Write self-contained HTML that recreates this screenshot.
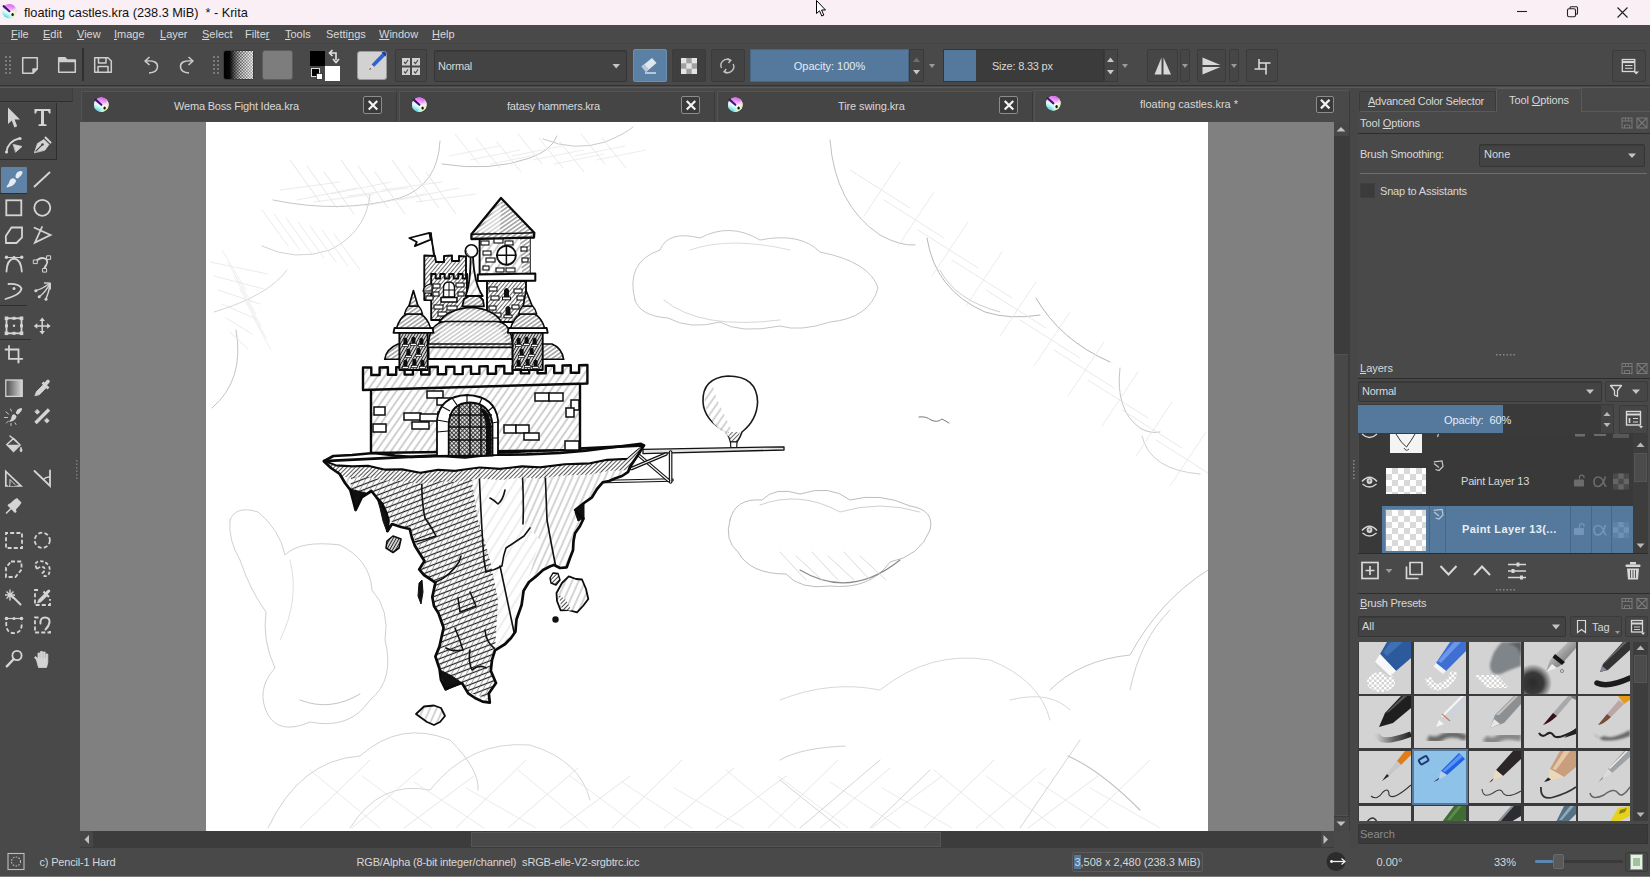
<!DOCTYPE html>
<html>
<head>
<meta charset="utf-8">
<title>Krita</title>
<style>
*{box-sizing:border-box;margin:0;padding:0}
html,body{width:1650px;height:877px;overflow:hidden;background:#494949;font-family:"Liberation Sans",sans-serif;font-size:11px;color:#d6d6d6}
.abs{position:absolute}
#title{left:0;top:0;width:1650px;height:25px;background:#f9eff5;color:#111;font-size:12.75px}
#title .t{left:24px;top:5px;white-space:pre;letter-spacing:-0.02px}
#menu{left:0;top:25px;width:1650px;height:19px;background:#494949}
#menu span{position:absolute;top:3px;font-size:11px;color:#d8d8d8}
#toolbar{left:0;top:44px;width:1650px;height:44px;background:#494949}
#tabs{left:80px;top:88px;width:1270px;height:34px;background:#494949}
.tab{position:absolute;top:2px;height:32px;border-right:1px solid #3a3a3a;border-left:1px solid #525252}
.tab .lbl{position:absolute;top:9px;font-size:11px;color:#d8d8d8;white-space:nowrap}
.tabx{position:absolute;top:8px;width:18px;height:18px;border:1px solid #9a9a9a;border-radius:2px;background:#3a3a3a}
#toolbox{left:0;top:88px;width:80px;height:760px;background:#494949}
#canvasarea{left:80px;top:122px;width:1254px;height:709px;background:#808080;overflow:hidden}
#paper{left:126px;top:0px;width:1002px;height:709px;background:#fff}
#vscroll{left:1334px;top:122px;width:16px;height:709px;background:#3c3c3c}
#hscroll{left:80px;top:831px;width:1254px;height:17px;background:#3c3c3c}
#status{left:0;top:848px;width:1650px;height:29px;background:#494949}
#dock{left:1350px;top:88px;width:300px;height:760px;background:#494949}

.btn{position:absolute;border:1px solid #3b3b3b;border-radius:2px;background:#464646}
.txt{position:absolute;white-space:pre;color:#d8d8d8;font-size:11px;line-height:13px}
.combo{position:absolute;background:#434343;border:1px solid #353535;border-radius:2px;box-shadow:inset 0 1px 0 #3a3a3a}
#ovl{position:absolute;left:0;top:0;width:1650px;height:877px;pointer-events:none}

.dk{position:absolute}
.hdr{position:absolute;left:1358px;width:292px;height:1px;background:#2c2c2c}
.cell{position:absolute;width:52px;height:52px;background:#d3d3d3;overflow:hidden}
.lt{position:absolute;white-space:pre;font-size:11px;line-height:13px;color:#d8d8d8}
</style>
</head>
<body>
<svg width="0" height="0" style="position:absolute"><defs>
<pattern id="cd" width="5" height="5" patternUnits="userSpaceOnUse"><rect width="2.5" height="2.5" fill="#fff"/><rect x="2.5" y="2.5" width="2.5" height="2.5" fill="#fff"/></pattern>
<radialGradient id="air"><stop offset="0" stop-color="#2b2b2b"/><stop offset="0.55" stop-color="#3a3a3a"/><stop offset="1" stop-color="#3a3a3a" stop-opacity="0"/></radialGradient>
<linearGradient id="sfade" x1="0" x2="1"><stop offset="0" stop-color="#333" stop-opacity="0.05"/><stop offset="0.5" stop-color="#333" stop-opacity="0.7"/><stop offset="1" stop-color="#222" stop-opacity="1"/></linearGradient>
<linearGradient id="metal" x1="0" y1="0" x2="1" y2="1"><stop offset="0" stop-color="#fafafa"/><stop offset="0.5" stop-color="#9a9a9a"/><stop offset="1" stop-color="#555"/></linearGradient>
<filter id="bl"><feGaussianBlur stdDeviation="1.6"/></filter>
<filter id="bl2"><feGaussianBlur stdDeviation="0.8"/></filter>
</defs></svg>

<!-- TITLE BAR -->
<div id="title" class="abs">
  <div class="abs t">floating castles.kra (238.3 MiB)  * - Krita</div>
</div>
<!-- MENU -->
<div id="menu" class="abs">
  <span style="left:11px"><u>F</u>ile</span><span style="left:43px"><u>E</u>dit</span><span style="left:77px"><u>V</u>iew</span><span style="left:114px"><u>I</u>mage</span><span style="left:160px"><u>L</u>ayer</span><span style="left:202px"><u>S</u>elect</span><span style="left:245px">Filte<u>r</u></span><span style="left:285px"><u>T</u>ools</span><span style="left:326px">Setti<u>n</u>gs</span><span style="left:379px"><u>W</u>indow</span><span style="left:432px"><u>H</u>elp</span>
</div>
<!-- TOOLBAR -->
<div id="toolbar" class="abs">
  <div class="abs" style="left:0;top:-1px;width:1650px;height:1px;background:#444"></div>
  <div class="abs" style="left:0;top:41px;width:1650px;height:1px;background:#333"></div>
  <div class="abs" style="left:0;top:43px;width:1650px;height:1px;background:#5a5a5a"></div>
</div>
<!-- toolbar widgets (page coords) -->
<div class="abs" style="left:82px;top:48px;width:2px;height:33px;background:#2f2f2f"></div>
<div class="abs" style="left:223px;top:50px;width:31px;height:30px;border-radius:3px;border:1px solid #3a3a3a;background:linear-gradient(90deg,#000 0%,#080808 22%,#5a5a5a 55%,#a8a8a8 100%)"></div>
<div class="abs" style="left:262px;top:50px;width:31px;height:30px;border-radius:3px;border:1px solid #5c5c5c;background:#7d7d7d"></div>
<div class="abs" style="left:310px;top:51px;width:15px;height:15px;background:#000"></div>
<div class="abs" style="left:325px;top:66px;width:15px;height:15px;background:#fff"></div>
<div class="abs" style="left:357px;top:51px;width:30px;height:29px;border-radius:3px;background:#d2d2d2;border:1px solid #9a9a9a"></div>
<div class="btn" style="left:395px;top:49px;width:32px;height:33px"></div>
<div class="combo" style="left:434px;top:50px;width:193px;height:32px"></div>
<div class="txt" style="left:438px;top:60px;letter-spacing:-0.25px">Normal</div>
<div class="abs" style="left:633px;top:49px;width:34px;height:33px;border-radius:2px;background:#5b80a6;border:1px solid #6d8fb1"></div>
<div class="btn" style="left:672px;top:49px;width:34px;height:33px;background:#3f3f3f"></div>
<div class="btn" style="left:711px;top:49px;width:34px;height:33px;background:#434343"></div>
<div class="abs" style="left:750px;top:49px;width:159px;height:33px;background:#54799d;border:1px solid #456786"></div>
<div class="txt" style="left:750px;top:60px;width:159px;text-align:center;color:#e4ecf4">Opacity: 100%</div>
<div class="abs" style="left:909px;top:49px;width:15px;height:33px;background:#454545;border:1px solid #3a3a3a"></div>
<div class="abs" style="left:943px;top:49px;width:161px;height:33px;background:#3b3b3b;border:1px solid #353535"></div>
<div class="abs" style="left:944px;top:50px;width:32px;height:31px;background:#54799d"></div>
<div class="txt" style="left:992px;top:60px;letter-spacing:-0.22px">Size: 8.33 px</div>
<div class="abs" style="left:1104px;top:49px;width:14px;height:33px;background:#454545;border:1px solid #3a3a3a"></div>
<div class="btn" style="left:1147px;top:49px;width:31px;height:33px"></div>
<div class="btn" style="left:1180px;top:49px;width:10px;height:33px"></div>
<div class="btn" style="left:1197px;top:49px;width:29px;height:33px"></div>
<div class="btn" style="left:1229px;top:49px;width:10px;height:33px"></div>
<div class="btn" style="left:1246px;top:49px;width:32px;height:33px"></div>
<div class="btn" style="left:1612px;top:50px;width:34px;height:32px"></div>

<!-- TABS -->
<div id="tabs" class="abs"></div>
<div class="abs" style="left:81px;top:91px;width:316px;height:30px;background:#454545;border-left:1px solid #545454;border-right:1px solid #3a3a3a;border-top:1px solid #545454"></div>
<div class="txt" style="left:174px;top:100px;letter-spacing:-0.19px">Wema Boss Fight Idea.kra</div>
<div class="abs" style="left:363px;top:96px;width:19px;height:18px;border:1px solid #8c8c8c;border-radius:2px;background:#3a3a3a"></div>
<div class="abs" style="left:399px;top:91px;width:316px;height:30px;background:#454545;border-left:1px solid #545454;border-right:1px solid #3a3a3a;border-top:1px solid #545454"></div>
<div class="txt" style="left:507px;top:100px;letter-spacing:-0.2px">fatasy hammers.kra</div>
<div class="abs" style="left:681px;top:96px;width:19px;height:18px;border:1px solid #8c8c8c;border-radius:2px;background:#3a3a3a"></div>
<div class="abs" style="left:717px;top:91px;width:316px;height:30px;background:#454545;border-left:1px solid #545454;border-right:1px solid #3a3a3a;border-top:1px solid #545454"></div>
<div class="txt" style="left:838px;top:100px;letter-spacing:-0.1px">Tire swing.kra</div>
<div class="abs" style="left:999px;top:96px;width:19px;height:18px;border:1px solid #8c8c8c;border-radius:2px;background:#3a3a3a"></div>
<div class="abs" style="left:1034px;top:90px;width:316px;height:32px;background:#494949;border-left:1px solid #545454;border-right:1px solid #3a3a3a;border-top:1px solid #545454"></div>
<div class="txt" style="left:1140px;top:98px;letter-spacing:-0.02px">floating castles.kra *</div>
<div class="abs" style="left:1316px;top:95.5px;width:18px;height:17px;border:1px solid #8c8c8c;border-radius:2px;background:#3a3a3a"></div>
<!-- TOOLBOX -->
<div id="toolbox" class="abs">
  <div class="abs" style="left:0;top:0;width:73px;height:14px;background:#454545;border-bottom:1px solid #2f2f2f;border-right:1px solid #3d3d3d"></div>
  <div class="abs" style="left:0;top:15px;width:57px;height:57px;background:#464646;border-right:1px solid #2e2e2e;border-bottom:1px solid #2e2e2e"></div>
  <div class="abs" style="left:1px;top:79px;width:26px;height:26px;background:#5f82a7;border-radius:1px"></div>
  <div class="abs" style="left:0;top:105px;width:27px;height:1px;background:#2e2e2e"></div>
  <div class="abs" style="left:0;top:217px;width:27px;height:1px;background:#2e2e2e"></div>
  <div class="abs" style="left:0;top:251px;width:31px;height:1px;background:#2e2e2e"></div>
</div>
<!-- CANVAS -->
<div id="canvasarea" class="abs">
  <div id="paper" class="abs"></div>
</div>
<!--ART--><svg id="art" viewBox="206 122 1002 709" style="position:absolute;left:206px;top:122px;width:1002px;height:709px">
<defs>
 <pattern id="hW" width="6" height="6" patternUnits="userSpaceOnUse" patternTransform="rotate(-55)"><rect width="6" height="6" fill="#fff"/><path d="M0 3 H6" stroke="#777" stroke-width="0.7"/></pattern>
 <pattern id="hR" width="3.4" height="3.4" patternUnits="userSpaceOnUse" patternTransform="rotate(-35)"><rect width="3.4" height="3.4" fill="#fff"/><path d="M0 1.7 H3.4" stroke="#444" stroke-width="0.8"/></pattern>
 <pattern id="hR2" width="2.6" height="2.6" patternUnits="userSpaceOnUse" patternTransform="rotate(-60)"><rect width="2.6" height="2.6" fill="#eee"/><path d="M0 1.3 H2.6" stroke="#222" stroke-width="1.1"/></pattern>
 <pattern id="hT" width="3" height="3" patternUnits="userSpaceOnUse" patternTransform="rotate(-50)"><rect width="3" height="3" fill="#fff"/><path d="M0 1.5 H3" stroke="#444" stroke-width="0.8"/></pattern>
 <pattern id="hI" width="5" height="5" patternUnits="userSpaceOnUse" patternTransform="rotate(-21)"><rect width="5" height="5" fill="#fff"/><path d="M0 2.5 H5" stroke="#1c1c1c" stroke-width="1.2"/></pattern>
 <pattern id="hI2" width="4.4" height="4.4" patternUnits="userSpaceOnUse" patternTransform="rotate(-62)"><path d="M0 2.2 H4.4" stroke="#555" stroke-width="0.6"/></pattern>
 <pattern id="hI3" width="6" height="6" patternUnits="userSpaceOnUse" patternTransform="rotate(-66)"><rect width="6" height="6" fill="#fff"/><path d="M0 3 H6" stroke="#7a7a7a" stroke-width="0.65"/></pattern>
 <pattern id="hI4" width="8" height="8" patternUnits="userSpaceOnUse" patternTransform="rotate(-58)"><rect width="8" height="8" fill="#fff"/><path d="M0 4 H8" stroke="#c4c4c4" stroke-width="0.6"/></pattern>
 <pattern id="hG" width="3" height="3" patternUnits="userSpaceOnUse" patternTransform="rotate(-45)"><rect width="3" height="3" fill="#fff"/><path d="M0 1.5 H3" stroke="#333" stroke-width="0.9"/></pattern>
 <pattern id="hGate" width="3" height="3" patternUnits="userSpaceOnUse" patternTransform="rotate(45)"><rect width="3" height="3" fill="#ddd"/><path d="M0 1.5 H3 M1.5 0 V3" stroke="#222" stroke-width="0.8"/></pattern>
</defs>

<path d="M440 141 Q438 185 400 198 Q340 214 273 200" fill="none" stroke="#c6c6c6" stroke-width="1" stroke-linecap="round"/>
<path d="M370 195 Q366 232 330 250 Q295 262 262 246" fill="none" stroke="#d2d2d2" stroke-width="1" stroke-linecap="round"/>
<path d="M287 270 Q268 296 214 312" fill="none" stroke="#d6d6d6" stroke-width="1" stroke-linecap="round"/>
<path d="M236 330 Q245 380 212 408" fill="none" stroke="#c4c4c4" stroke-width="1" stroke-linecap="round"/>
<path d="M442 164 Q490 172 530 158 Q552 150 557 136" fill="none" stroke="#c2c2c2" stroke-width="1" stroke-linecap="round"/>
<path d="M543 139 Q575 152 605 142 Q625 134 633 127" fill="none" stroke="#cacaca" stroke-width="1" stroke-linecap="round"/>
<path d="M290 160 L320 202" fill="none" stroke="#e0e0e0" stroke-width="0.8" stroke-linecap="round"/>
<path d="M280 190 L340 182" fill="none" stroke="#e6e6e6" stroke-width="0.8" stroke-linecap="round"/>
<path d="M307 166 L337 208" fill="none" stroke="#e0e0e0" stroke-width="0.8" stroke-linecap="round"/>
<path d="M297 200 L357 188" fill="none" stroke="#e6e6e6" stroke-width="0.8" stroke-linecap="round"/>
<path d="M324 172 L354 214" fill="none" stroke="#e0e0e0" stroke-width="0.8" stroke-linecap="round"/>
<path d="M314 202 L374 194" fill="none" stroke="#e6e6e6" stroke-width="0.8" stroke-linecap="round"/>
<path d="M341 160 L371 202" fill="none" stroke="#e0e0e0" stroke-width="0.8" stroke-linecap="round"/>
<path d="M331 194 L391 182" fill="none" stroke="#e6e6e6" stroke-width="0.8" stroke-linecap="round"/>
<path d="M358 166 L388 208" fill="none" stroke="#e0e0e0" stroke-width="0.8" stroke-linecap="round"/>
<path d="M348 196 L408 188" fill="none" stroke="#e6e6e6" stroke-width="0.8" stroke-linecap="round"/>
<path d="M375 172 L405 214" fill="none" stroke="#e0e0e0" stroke-width="0.8" stroke-linecap="round"/>
<path d="M365 206 L425 194" fill="none" stroke="#e6e6e6" stroke-width="0.8" stroke-linecap="round"/>
<path d="M392 160 L422 202" fill="none" stroke="#e0e0e0" stroke-width="0.8" stroke-linecap="round"/>
<path d="M382 190 L442 182" fill="none" stroke="#e6e6e6" stroke-width="0.8" stroke-linecap="round"/>
<path d="M409 166 L439 208" fill="none" stroke="#e0e0e0" stroke-width="0.8" stroke-linecap="round"/>
<path d="M399 200 L459 188" fill="none" stroke="#e6e6e6" stroke-width="0.8" stroke-linecap="round"/>
<path d="M426 172 L456 214" fill="none" stroke="#e0e0e0" stroke-width="0.8" stroke-linecap="round"/>
<path d="M416 202 L476 194" fill="none" stroke="#e6e6e6" stroke-width="0.8" stroke-linecap="round"/>
<path d="M455 134 L479 164" fill="none" stroke="#e2e2e2" stroke-width="0.8" stroke-linecap="round"/>
<path d="M449 156 L499 146" fill="none" stroke="#e8e8e8" stroke-width="0.8" stroke-linecap="round"/>
<path d="M476 138 L500 168" fill="none" stroke="#e2e2e2" stroke-width="0.8" stroke-linecap="round"/>
<path d="M470 160 L520 150" fill="none" stroke="#e8e8e8" stroke-width="0.8" stroke-linecap="round"/>
<path d="M497 142 L521 172" fill="none" stroke="#e2e2e2" stroke-width="0.8" stroke-linecap="round"/>
<path d="M491 164 L541 154" fill="none" stroke="#e8e8e8" stroke-width="0.8" stroke-linecap="round"/>
<path d="M518 134 L542 164" fill="none" stroke="#e2e2e2" stroke-width="0.8" stroke-linecap="round"/>
<path d="M512 156 L562 146" fill="none" stroke="#e8e8e8" stroke-width="0.8" stroke-linecap="round"/>
<path d="M539 138 L563 168" fill="none" stroke="#e2e2e2" stroke-width="0.8" stroke-linecap="round"/>
<path d="M533 160 L583 150" fill="none" stroke="#e8e8e8" stroke-width="0.8" stroke-linecap="round"/>
<path d="M560 142 L584 172" fill="none" stroke="#e2e2e2" stroke-width="0.8" stroke-linecap="round"/>
<path d="M554 164 L604 154" fill="none" stroke="#e8e8e8" stroke-width="0.8" stroke-linecap="round"/>
<path d="M581 134 L605 164" fill="none" stroke="#e2e2e2" stroke-width="0.8" stroke-linecap="round"/>
<path d="M575 156 L625 146" fill="none" stroke="#e8e8e8" stroke-width="0.8" stroke-linecap="round"/>
<path d="M602 138 L626 168" fill="none" stroke="#e2e2e2" stroke-width="0.8" stroke-linecap="round"/>
<path d="M596 160 L646 150" fill="none" stroke="#e8e8e8" stroke-width="0.8" stroke-linecap="round"/>
<path d="M262 210 L288 246" fill="none" stroke="#e6e6e6" stroke-width="0.8" stroke-linecap="round"/>
<path d="M274 214 L300 250" fill="none" stroke="#e6e6e6" stroke-width="0.8" stroke-linecap="round"/>
<path d="M286 218 L312 254" fill="none" stroke="#e6e6e6" stroke-width="0.8" stroke-linecap="round"/>
<path d="M298 222 L324 258" fill="none" stroke="#e6e6e6" stroke-width="0.8" stroke-linecap="round"/>
<path d="M310 226 L336 262" fill="none" stroke="#e6e6e6" stroke-width="0.8" stroke-linecap="round"/>
<path d="M322 230 L348 266" fill="none" stroke="#e6e6e6" stroke-width="0.8" stroke-linecap="round"/>
<path d="M334 234 L360 270" fill="none" stroke="#e6e6e6" stroke-width="0.8" stroke-linecap="round"/>
<path d="M210 262 L268 274" fill="none" stroke="#e6e6e6" stroke-width="0.8" stroke-linecap="round"/>
<path d="M222 250 L246 290" fill="none" stroke="#eaeaea" stroke-width="0.8" stroke-linecap="round"/>
<path d="M214 276 L264 289" fill="none" stroke="#e6e6e6" stroke-width="0.8" stroke-linecap="round"/>
<path d="M228 263 L251 302" fill="none" stroke="#eaeaea" stroke-width="0.8" stroke-linecap="round"/>
<path d="M218 290 L260 304" fill="none" stroke="#e6e6e6" stroke-width="0.8" stroke-linecap="round"/>
<path d="M234 276 L256 314" fill="none" stroke="#eaeaea" stroke-width="0.8" stroke-linecap="round"/>
<path d="M222 304 L256 319" fill="none" stroke="#e6e6e6" stroke-width="0.8" stroke-linecap="round"/>
<path d="M240 289 L261 326" fill="none" stroke="#eaeaea" stroke-width="0.8" stroke-linecap="round"/>
<path d="M226 318 L252 334" fill="none" stroke="#e6e6e6" stroke-width="0.8" stroke-linecap="round"/>
<path d="M246 302 L266 338" fill="none" stroke="#eaeaea" stroke-width="0.8" stroke-linecap="round"/>
<path d="M230 332 L248 349" fill="none" stroke="#e6e6e6" stroke-width="0.8" stroke-linecap="round"/>
<path d="M252 315 L271 350" fill="none" stroke="#eaeaea" stroke-width="0.8" stroke-linecap="round"/>
<path d="M635 300 Q625 262 660 250 Q668 230 700 238 Q730 222 760 240 Q800 232 820 252 Q870 262 878 288 Q870 318 830 322 Q800 332 780 326 Q740 334 720 322 Q690 330 668 318 Q640 316 635 300Z" fill="none" stroke="#c6c6c6" stroke-width="1" stroke-linecap="round"/>
<path d="M664 300 Q700 330 780 320" fill="none" stroke="#d6d6d6" stroke-width="1" stroke-linecap="round"/>
<path d="M690 250 Q730 236 790 250" fill="none" stroke="#dcdcdc" stroke-width="1" stroke-linecap="round"/>
<path d="M830 140 Q835 205 880 235 Q900 246 915 245" fill="none" stroke="#c0c0c0" stroke-width="1" stroke-linecap="round"/>
<path d="M927 238 Q935 290 985 312 Q1010 320 1040 315" fill="none" stroke="#b8b8b8" stroke-width="1" stroke-linecap="round"/>
<path d="M940 270 Q955 300 1000 312" fill="none" stroke="#cdcdcd" stroke-width="1" stroke-linecap="round"/>
<path d="M1036 298 Q1060 340 1110 362" fill="none" stroke="#b4b4b4" stroke-width="1" stroke-linecap="round"/>
<path d="M1120 368 Q1115 410 1140 428 Q1150 434 1160 432" fill="none" stroke="#c4c4c4" stroke-width="1" stroke-linecap="round"/>
<path d="M1142 436 Q1150 470 1200 474" fill="none" stroke="#cfcfcf" stroke-width="1" stroke-linecap="round"/>
<path d="M850 170 L910 208" fill="none" stroke="#e3e3e3" stroke-width="0.8" stroke-linecap="round"/>
<path d="M900 162 L864 216" fill="none" stroke="#e6e6e6" stroke-width="0.8" stroke-linecap="round"/>
<path d="M884 200 L944 238" fill="none" stroke="#e3e3e3" stroke-width="0.8" stroke-linecap="round"/>
<path d="M934 192 L898 246" fill="none" stroke="#e6e6e6" stroke-width="0.8" stroke-linecap="round"/>
<path d="M918 230 L978 268" fill="none" stroke="#e3e3e3" stroke-width="0.8" stroke-linecap="round"/>
<path d="M968 222 L932 276" fill="none" stroke="#e6e6e6" stroke-width="0.8" stroke-linecap="round"/>
<path d="M952 260 L1012 298" fill="none" stroke="#e3e3e3" stroke-width="0.8" stroke-linecap="round"/>
<path d="M1002 252 L966 306" fill="none" stroke="#e6e6e6" stroke-width="0.8" stroke-linecap="round"/>
<path d="M986 290 L1046 328" fill="none" stroke="#e3e3e3" stroke-width="0.8" stroke-linecap="round"/>
<path d="M1036 282 L1000 336" fill="none" stroke="#e6e6e6" stroke-width="0.8" stroke-linecap="round"/>
<path d="M1020 320 L1080 358" fill="none" stroke="#e3e3e3" stroke-width="0.8" stroke-linecap="round"/>
<path d="M1070 312 L1034 366" fill="none" stroke="#e6e6e6" stroke-width="0.8" stroke-linecap="round"/>
<path d="M1054 350 L1114 388" fill="none" stroke="#e3e3e3" stroke-width="0.8" stroke-linecap="round"/>
<path d="M1104 342 L1068 396" fill="none" stroke="#e6e6e6" stroke-width="0.8" stroke-linecap="round"/>
<path d="M1088 380 L1148 418" fill="none" stroke="#e3e3e3" stroke-width="0.8" stroke-linecap="round"/>
<path d="M1138 372 L1102 426" fill="none" stroke="#e6e6e6" stroke-width="0.8" stroke-linecap="round"/>
<path d="M1122 410 L1182 448" fill="none" stroke="#e3e3e3" stroke-width="0.8" stroke-linecap="round"/>
<path d="M1172 402 L1136 456" fill="none" stroke="#e6e6e6" stroke-width="0.8" stroke-linecap="round"/>
<path d="M1156 440 L1216 478" fill="none" stroke="#e3e3e3" stroke-width="0.8" stroke-linecap="round"/>
<path d="M1206 432 L1170 486" fill="none" stroke="#e6e6e6" stroke-width="0.8" stroke-linecap="round"/>
<path d="M919 417 Q926 416 931 420 Q937 423 942 419 L949 423" fill="none" stroke="#777" stroke-width="1" stroke-linecap="round"/>
<path d="M730 520 Q735 498 762 500 Q775 486 800 494 Q830 484 850 500 Q880 492 910 506 Q935 510 930 530 Q920 556 890 562 Q870 590 830 586 Q800 590 786 574 Q750 574 738 552 Q724 540 730 520Z" fill="none" stroke="#bdbdbd" stroke-width="1" stroke-linecap="round"/>
<path d="M800 570 Q850 600 900 560" fill="none" stroke="#8a8a8a" stroke-width="1.2" stroke-linecap="round"/>
<path d="M760 505 Q800 490 840 512 Q880 500 920 512" fill="none" stroke="#d0d0d0" stroke-width="1" stroke-linecap="round"/>
<path d="M780 552 L806 580" fill="none" stroke="#cfcfcf" stroke-width="0.8" stroke-linecap="round"/>
<path d="M796 556 L822 580" fill="none" stroke="#cfcfcf" stroke-width="0.8" stroke-linecap="round"/>
<path d="M812 552 L838 580" fill="none" stroke="#cfcfcf" stroke-width="0.8" stroke-linecap="round"/>
<path d="M828 556 L854 580" fill="none" stroke="#cfcfcf" stroke-width="0.8" stroke-linecap="round"/>
<path d="M844 552 L870 580" fill="none" stroke="#cfcfcf" stroke-width="0.8" stroke-linecap="round"/>
<path d="M860 556 L886 580" fill="none" stroke="#cfcfcf" stroke-width="0.8" stroke-linecap="round"/>
<path d="M230 520 Q236 505 258 512 Q280 530 285 555 Q300 540 340 545 Q370 560 372 590 Q390 610 385 640 Q395 680 370 700 Q350 730 310 722 Q280 735 268 715 Q255 690 275 668 Q262 640 266 612 Q250 590 240 560 Q228 540 230 520Z" fill="none" stroke="#d0d0d0" stroke-width="1" stroke-linecap="round"/>
<path d="M290 560 Q300 600 280 640" fill="none" stroke="#e0e0e0" stroke-width="1" stroke-linecap="round"/>
<path d="M300 700 Q330 712 360 694" fill="none" stroke="#c4c4c4" stroke-width="1" stroke-linecap="round"/>
<path d="M268 828 Q300 760 360 756 Q400 720 450 740 Q480 770 478 790" fill="none" stroke="#d2d2d2" stroke-width="1" stroke-linecap="round"/>
<path d="M350 828 Q380 780 430 790 Q470 740 530 745 Q580 760 590 800" fill="none" stroke="#d6d6d6" stroke-width="1" stroke-linecap="round"/>
<path d="M780 700 Q830 680 880 690 Q930 650 990 660 Q1040 680 1050 720" fill="none" stroke="#d8d8d8" stroke-width="1" stroke-linecap="round"/>
<path d="M1050 690 Q1080 660 1130 655 Q1160 600 1208 570" fill="none" stroke="#c8c8c8" stroke-width="1" stroke-linecap="round"/>
<path d="M1130 690 Q1140 640 1170 610" fill="none" stroke="#d0d0d0" stroke-width="1" stroke-linecap="round"/>
<path d="M1010 700 Q1050 690 1070 710" fill="none" stroke="#d8d8d8" stroke-width="1" stroke-linecap="round"/>
<path d="M1068 756 Q1100 770 1140 810" fill="none" stroke="#bfbfbf" stroke-width="1.1" stroke-linecap="round"/>
<path d="M780 760 Q800 748 845 746" fill="none" stroke="#cfcfcf" stroke-width="1" stroke-linecap="round"/>
<path d="M300 828 L370 760" fill="none" stroke="#e0e0e0" stroke-width="0.8" stroke-linecap="round"/>
<path d="M310 770 L380 828" fill="none" stroke="#e4e4e4" stroke-width="0.8" stroke-linecap="round"/>
<path d="M352 828 L422 768" fill="none" stroke="#e0e0e0" stroke-width="0.8" stroke-linecap="round"/>
<path d="M362 776 L432 828" fill="none" stroke="#e4e4e4" stroke-width="0.8" stroke-linecap="round"/>
<path d="M404 828 L474 776" fill="none" stroke="#e0e0e0" stroke-width="0.8" stroke-linecap="round"/>
<path d="M414 782 L484 828" fill="none" stroke="#e4e4e4" stroke-width="0.8" stroke-linecap="round"/>
<path d="M456 828 L526 760" fill="none" stroke="#e0e0e0" stroke-width="0.8" stroke-linecap="round"/>
<path d="M466 788 L536 828" fill="none" stroke="#e4e4e4" stroke-width="0.8" stroke-linecap="round"/>
<path d="M508 828 L578 768" fill="none" stroke="#e0e0e0" stroke-width="0.8" stroke-linecap="round"/>
<path d="M518 770 L588 828" fill="none" stroke="#e4e4e4" stroke-width="0.8" stroke-linecap="round"/>
<path d="M560 828 L630 776" fill="none" stroke="#e0e0e0" stroke-width="0.8" stroke-linecap="round"/>
<path d="M570 776 L640 828" fill="none" stroke="#e4e4e4" stroke-width="0.8" stroke-linecap="round"/>
<path d="M612 828 L682 760" fill="none" stroke="#e0e0e0" stroke-width="0.8" stroke-linecap="round"/>
<path d="M622 782 L692 828" fill="none" stroke="#e4e4e4" stroke-width="0.8" stroke-linecap="round"/>
<path d="M664 828 L734 768" fill="none" stroke="#e0e0e0" stroke-width="0.8" stroke-linecap="round"/>
<path d="M674 788 L744 828" fill="none" stroke="#e4e4e4" stroke-width="0.8" stroke-linecap="round"/>
<path d="M716 828 L786 776" fill="none" stroke="#e0e0e0" stroke-width="0.8" stroke-linecap="round"/>
<path d="M726 770 L796 828" fill="none" stroke="#e4e4e4" stroke-width="0.8" stroke-linecap="round"/>
<path d="M768 828 L838 760" fill="none" stroke="#e0e0e0" stroke-width="0.8" stroke-linecap="round"/>
<path d="M778 776 L848 828" fill="none" stroke="#e4e4e4" stroke-width="0.8" stroke-linecap="round"/>
<path d="M820 828 L890 768" fill="none" stroke="#e0e0e0" stroke-width="0.8" stroke-linecap="round"/>
<path d="M830 782 L900 828" fill="none" stroke="#e4e4e4" stroke-width="0.8" stroke-linecap="round"/>
<path d="M872 828 L942 776" fill="none" stroke="#e0e0e0" stroke-width="0.8" stroke-linecap="round"/>
<path d="M882 788 L952 828" fill="none" stroke="#e4e4e4" stroke-width="0.8" stroke-linecap="round"/>
<path d="M924 828 L994 760" fill="none" stroke="#e0e0e0" stroke-width="0.8" stroke-linecap="round"/>
<path d="M934 770 L1004 828" fill="none" stroke="#e4e4e4" stroke-width="0.8" stroke-linecap="round"/>
<path d="M976 828 L1046 768" fill="none" stroke="#e0e0e0" stroke-width="0.8" stroke-linecap="round"/>
<path d="M986 776 L1056 828" fill="none" stroke="#e4e4e4" stroke-width="0.8" stroke-linecap="round"/>
<path d="M1028 828 L1098 776" fill="none" stroke="#e0e0e0" stroke-width="0.8" stroke-linecap="round"/>
<path d="M1038 782 L1108 828" fill="none" stroke="#e4e4e4" stroke-width="0.8" stroke-linecap="round"/>
<path d="M1080 828 L1150 760" fill="none" stroke="#e0e0e0" stroke-width="0.8" stroke-linecap="round"/>
<path d="M1090 788 L1160 828" fill="none" stroke="#e4e4e4" stroke-width="0.8" stroke-linecap="round"/>
<path d="M780 780 L840 828 M800 828 L880 760 M870 828 L930 770 M1020 828 L1080 740" fill="none" stroke="#d0d0d0" stroke-width="0.9" stroke-linecap="round"/>
<path d="M643 449.4 L784 446.8 L784 450 L643 453.6 Z" fill="#e4e4e4" stroke="#111" stroke-width="1.3" stroke-linejoin="round"/>
<path d="M606 481.5 L672 480" fill="none" stroke="#111" stroke-width="3.6" stroke-linecap="round"/>
<path d="M606 481.5 L672 480" fill="none" stroke="#f2f2f2" stroke-width="1.3" stroke-linecap="round"/>
<path d="M670.6 452 V482" fill="none" stroke="#111" stroke-width="3.6" stroke-linecap="round"/>
<path d="M670.6 452 V482" fill="none" stroke="#f2f2f2" stroke-width="1.3" stroke-linecap="round"/>
<path d="M638 454.5 L668.5 480.5" fill="none" stroke="#111" stroke-width="3.6" stroke-linecap="round"/>
<path d="M638 454.5 L668.5 480.5" fill="none" stroke="#f2f2f2" stroke-width="1.3" stroke-linecap="round"/>
<path d="M666 454 L631.5 468.5" fill="none" stroke="#111" stroke-width="3.6" stroke-linecap="round"/>
<path d="M666 454 L631.5 468.5" fill="none" stroke="#f2f2f2" stroke-width="1.3" stroke-linecap="round"/>
<clipPath id="cpI"><path d="M323.8 461.2 L331.0 468.0 L339.7 474.0 L345.0 483.0 L350.3 489.9 L353.0 500.0 L355.6 510.0 L362.0 497.0 L371.5 491.0 L377.0 498.0 L382.0 503.6 L386.0 512.0 L388.5 520.6 L387.4 531.2 L392.0 524.0 L401.0 527.0 L409.7 529.0 L412.0 538.0 L415.0 546.0 L420.0 554.0 L424.5 561.0 L419.2 569.4 L424.0 575.0 L429.3 578.5 L435.4 582.6 L432.3 597.0 L434.0 606.0 L438.5 613.4 L443.6 627.7 L439.5 646.2 L435.4 656.5 L439.5 668.8 L441.0 680.0 L445.7 689.3 L452.0 686.0 L462.0 683.0 L468.2 693.4 L475.0 698.0 L482.6 701.6 L489.8 702.6 L489.8 702.6 L488.8 693.4 L496.0 683.0 L490.8 670.8 L492.0 660.0 L495.0 650.3 L505.2 644.0 L511.0 638.0 L515.4 631.8 L516.5 619.5 L521.6 605.0 L523.6 590.8 L529.0 582.0 L536.0 576.4 L543.0 570.0 L550.3 566.2 L554.0 565.0 L560.0 568.0 L566.7 567.3 L570.0 558.0 L573.0 550.3 L573.5 541.0 L575.0 533.3 L580.0 526.0 L583.6 518.5 L578.0 514.0 L575.2 510.0 L584.0 503.0 L592.0 497.3 L597.0 489.0 L602.7 482.4 L609.0 481.0 L615.5 478.2 L622.0 476.0 L628.2 471.8 L630.0 467.0 L632.4 463.3 L638.0 455.0 L644.0 445.3 Z"/></clipPath>
<path d="M323.8 461.2 L331.0 468.0 L339.7 474.0 L345.0 483.0 L350.3 489.9 L353.0 500.0 L355.6 510.0 L362.0 497.0 L371.5 491.0 L377.0 498.0 L382.0 503.6 L386.0 512.0 L388.5 520.6 L387.4 531.2 L392.0 524.0 L401.0 527.0 L409.7 529.0 L412.0 538.0 L415.0 546.0 L420.0 554.0 L424.5 561.0 L419.2 569.4 L424.0 575.0 L429.3 578.5 L435.4 582.6 L432.3 597.0 L434.0 606.0 L438.5 613.4 L443.6 627.7 L439.5 646.2 L435.4 656.5 L439.5 668.8 L441.0 680.0 L445.7 689.3 L452.0 686.0 L462.0 683.0 L468.2 693.4 L475.0 698.0 L482.6 701.6 L489.8 702.6 L489.8 702.6 L488.8 693.4 L496.0 683.0 L490.8 670.8 L492.0 660.0 L495.0 650.3 L505.2 644.0 L511.0 638.0 L515.4 631.8 L516.5 619.5 L521.6 605.0 L523.6 590.8 L529.0 582.0 L536.0 576.4 L543.0 570.0 L550.3 566.2 L554.0 565.0 L560.0 568.0 L566.7 567.3 L570.0 558.0 L573.0 550.3 L573.5 541.0 L575.0 533.3 L580.0 526.0 L583.6 518.5 L578.0 514.0 L575.2 510.0 L584.0 503.0 L592.0 497.3 L597.0 489.0 L602.7 482.4 L609.0 481.0 L615.5 478.2 L622.0 476.0 L628.2 471.8 L630.0 467.0 L632.4 463.3 L638.0 455.0 L644.0 445.3 L323.8 461.2 L333.3 456.0 L352.0 455.0 L373.6 453.0 L395.0 455.5 L411.8 457.0 L441.5 456.0 L465.0 457.5 L490.3 454.8 L526.4 454.4 L560.0 453.0 L585.8 450.6 L615.0 447.0 L641.0 443.8 L644.0 445.3 Z" fill="#fff"/>
<path d="M323.8 461.2 L331.0 468.0 L339.7 474.0 L345.0 483.0 L350.3 489.9 L353.0 500.0 L355.6 510.0 L362.0 497.0 L371.5 491.0 L377.0 498.0 L382.0 503.6 L386.0 512.0 L388.5 520.6 L387.4 531.2 L392.0 524.0 L401.0 527.0 L409.7 529.0 L412.0 538.0 L415.0 546.0 L420.0 554.0 L424.5 561.0 L419.2 569.4 L424.0 575.0 L429.3 578.5 L435.4 582.6 L432.3 597.0 L434.0 606.0 L438.5 613.4 L443.6 627.7 L439.5 646.2 L435.4 656.5 L439.5 668.8 L441.0 680.0 L445.7 689.3 L452.0 686.0 L462.0 683.0 L468.2 693.4 L475.0 698.0 L482.6 701.6 L489.8 702.6 L489.8 702.6 L488.8 693.4 L496.0 683.0 L490.8 670.8 L492.0 660.0 L495.0 650.3 L505.2 644.0 L511.0 638.0 L515.4 631.8 L516.5 619.5 L521.6 605.0 L523.6 590.8 L529.0 582.0 L536.0 576.4 L543.0 570.0 L550.3 566.2 L554.0 565.0 L560.0 568.0 L566.7 567.3 L570.0 558.0 L573.0 550.3 L573.5 541.0 L575.0 533.3 L580.0 526.0 L583.6 518.5 L578.0 514.0 L575.2 510.0 L584.0 503.0 L592.0 497.3 L597.0 489.0 L602.7 482.4 L609.0 481.0 L615.5 478.2 L622.0 476.0 L628.2 471.8 L630.0 467.0 L632.4 463.3 L638.0 455.0 L644.0 445.3 Z" fill="url(#hI3)"/>
<g clip-path="url(#cpI)">
<path d="M352.0 468.0 L420.0 474.0 L470.0 470.0 L478.0 520.0 L490.0 560.0 L500.0 600.0 L498.0 640.0 L492.0 700.0 L470.0 693.0 L445.0 689.0 L436.0 656.0 L443.0 628.0 L432.0 597.0 L435.0 583.0 L419.0 569.0 L424.0 561.0 L410.0 529.0 L388.0 520.0 L382.0 503.0 L371.0 491.0 L356.0 510.0 L350.0 490.0 Z" fill="url(#hI)"/>
<path d="M352.0 468.0 L420.0 474.0 L470.0 470.0 L478.0 520.0 L490.0 560.0 L500.0 600.0 L498.0 640.0 L492.0 700.0 L470.0 693.0 L445.0 689.0 L436.0 656.0 L443.0 628.0 L432.0 597.0 L435.0 583.0 L419.0 569.0 L424.0 561.0 L410.0 529.0 L388.0 520.0 L382.0 503.0 L371.0 491.0 L356.0 510.0 L350.0 490.0 Z" fill="url(#hI2)" opacity="0.8"/>
<path d="M478.0 470.0 L520.0 468.0 L522.0 520.0 L540.0 540.0 L528.0 580.0 L520.0 610.0 L514.0 632.0 L495.0 650.0 L498.0 600.0 L490.0 560.0 L480.0 520.0 Z" fill="url(#hI4)"/>
</g>
<path d="M422 473 Q421 500 425 518 Q432 528 436 536 Q425 540 414 542" fill="none" stroke="#111" stroke-width="1.6" stroke-linecap="round" stroke-linejoin="round"/>
<path d="M479 468 Q481 520 484 560 L486 572" fill="none" stroke="#111" stroke-width="1.6" stroke-linecap="round" stroke-linejoin="round"/>
<path d="M486 572 Q495 570 502 566 Q503 556 506 548 Q518 540 524 536 L530 528" fill="none" stroke="#111" stroke-width="1.6" stroke-linecap="round" stroke-linejoin="round"/>
<path d="M522 468 Q524 500 523 524" fill="none" stroke="#111" stroke-width="1.6" stroke-linecap="round" stroke-linejoin="round"/>
<path d="M545 468 L547 520 Q556 570 556 566" fill="none" stroke="#111" stroke-width="1.6" stroke-linecap="round" stroke-linejoin="round"/>
<path d="M505 490 Q503 500 498 504 Q494 500 490 498" fill="none" stroke="#111" stroke-width="1.6" stroke-linecap="round" stroke-linejoin="round"/>
<path d="M436 582 Q450 576 459 562 L461 556" fill="none" stroke="#111" stroke-width="1.6" stroke-linecap="round" stroke-linejoin="round"/>
<path d="M458 598 L460 612 L476 606 L470 592" fill="none" stroke="#111" stroke-width="1.6" stroke-linecap="round" stroke-linejoin="round"/>
<path d="M455 628 Q460 640 463 650 Q452 652 446 648" fill="none" stroke="#111" stroke-width="1.6" stroke-linecap="round" stroke-linejoin="round"/>
<path d="M485 630 Q486 642 494 648" fill="none" stroke="#111" stroke-width="1.6" stroke-linecap="round" stroke-linejoin="round"/>
<path d="M470 650 Q468 662 472 670 Q480 664 486 668" fill="none" stroke="#111" stroke-width="1.6" stroke-linecap="round" stroke-linejoin="round"/>
<path d="M500 566 L514 632" fill="none" stroke="#111" stroke-width="1.6" stroke-linecap="round" stroke-linejoin="round"/>
<path d="M350 489 L355.6 511 L362 497 L366 493 Z" fill="#111" stroke="#111" stroke-width="1"/>
<path d="M377 498 L386 512 L388.5 520.6 L387 532 L383 521 L380 508 Z" fill="#111" stroke="#111" stroke-width="1"/>
<path d="M440 670 L445.7 690 L456 686 L462 683 L452 676 Z" fill="#111" stroke="#111" stroke-width="1"/>
<path d="M419 583 L422 580 L423 592 L421 604 L418 596 Z" fill="#111" stroke="#111" stroke-width="1"/>
<path d="M575 512 L584 504 L584 518 L578 521 Z" fill="#111" stroke="#111" stroke-width="1"/>
<path d="M323.8 461.2 L333.3 456.0 L352.0 455.0 L373.6 453.0 L395.0 455.5 L411.8 457.0 L441.5 456.0 L465.0 457.5 L490.3 454.8 L526.4 454.4 L560.0 453.0 L585.8 450.6 L615.0 447.0 L641.0 443.8 L644.0 445.3 L644.0 445.3 L636.0 452.0 L628.0 459.0 L607.0 460.0 L590.0 463.5 L564.6 464.4 L540.0 467.5 L522.0 466.5 L500.0 469.0 L479.7 467.6 L455.0 471.0 L438.0 470.0 L420.3 473.0 L402.0 469.5 L384.0 469.7 L368.0 466.0 L352.4 466.5 L335.5 465.5 L323.8 461.2 Z" fill="#fff" stroke="none"/>
<path d="M644.0 445.3 L636.0 452.0 L628.0 459.0 L607.0 460.0 L590.0 463.5 L564.6 464.4 L540.0 467.5 L522.0 466.5 L500.0 469.0 L479.7 467.6 L455.0 471.0 L438.0 470.0 L420.3 473.0 L402.0 469.5 L384.0 469.7 L368.0 466.0 L352.4 466.5 L335.5 465.5 L323.8 461.2" fill="none" stroke="#0a0a0a" stroke-width="2.4" stroke-linejoin="round"/>
<g clip-path="url(#cpI)"><path d="M644.0 445.3 L636.0 452.0 L628.0 459.0 L607.0 460.0 L590.0 463.5 L564.6 464.4 L540.0 467.5 L522.0 466.5 L500.0 469.0 L479.7 467.6 L455.0 471.0 L438.0 470.0 L420.3 473.0 L402.0 469.5 L384.0 469.7 L368.0 466.0 L352.4 466.5 L335.5 465.5 L323.8 461.2" fill="none" stroke="url(#hG)" stroke-width="10" transform="translate(0,6)" opacity="0.9"/></g>
<path d="M323.8 461.2 L333.3 456.0 L352.0 455.0 L373.6 453.0 L395.0 455.5 L411.8 457.0 L441.5 456.0 L465.0 457.5 L490.3 454.8 L526.4 454.4 L560.0 453.0 L585.8 450.6 L615.0 447.0 L641.0 443.8 L644.0 445.3" fill="none" stroke="#0a0a0a" stroke-width="2.6" stroke-linejoin="round"/>
<path d="M323.8 461.2 L331.0 468.0 L339.7 474.0 L345.0 483.0 L350.3 489.9 L353.0 500.0 L355.6 510.0 L362.0 497.0 L371.5 491.0 L377.0 498.0 L382.0 503.6 L386.0 512.0 L388.5 520.6 L387.4 531.2 L392.0 524.0 L401.0 527.0 L409.7 529.0 L412.0 538.0 L415.0 546.0 L420.0 554.0 L424.5 561.0 L419.2 569.4 L424.0 575.0 L429.3 578.5 L435.4 582.6 L432.3 597.0 L434.0 606.0 L438.5 613.4 L443.6 627.7 L439.5 646.2 L435.4 656.5 L439.5 668.8 L441.0 680.0 L445.7 689.3 L452.0 686.0 L462.0 683.0 L468.2 693.4 L475.0 698.0 L482.6 701.6 L489.8 702.6 L489.8 702.6 L488.8 693.4 L496.0 683.0 L490.8 670.8 L492.0 660.0 L495.0 650.3 L505.2 644.0 L511.0 638.0 L515.4 631.8 L516.5 619.5 L521.6 605.0 L523.6 590.8 L529.0 582.0 L536.0 576.4 L543.0 570.0 L550.3 566.2 L554.0 565.0 L560.0 568.0 L566.7 567.3 L570.0 558.0 L573.0 550.3 L573.5 541.0 L575.0 533.3 L580.0 526.0 L583.6 518.5 L578.0 514.0 L575.2 510.0 L584.0 503.0 L592.0 497.3 L597.0 489.0 L602.7 482.4 L609.0 481.0 L615.5 478.2 L622.0 476.0 L628.2 471.8 L630.0 467.0 L632.4 463.3 L638.0 455.0 L644.0 445.3 Z" fill="none" stroke="#0a0a0a" stroke-width="2.7" stroke-linejoin="round"/>
<path d="M416.0 714.0 L424.0 706.5 L434.0 705.5 L441.0 708.0 L445.0 716.0 L440.0 722.0 L434.0 725.0 L427.0 722.0 Z" fill="url(#hI3)" stroke="#0c0c0c" stroke-width="1.8" stroke-linejoin="round"/>
<path d="M556.5 593.0 L562.0 583.0 L568.8 576.4 L576.0 579.0 L582.0 579.5 L586.0 589.0 L588.3 599.0 L583.0 606.0 L577.0 612.3 L568.0 610.0 L560.6 610.3 L557.0 601.0 Z" fill="url(#hI3)" stroke="#0c0c0c" stroke-width="1.8" stroke-linejoin="round"/>
<path d="M558 594 L562 609 L572 611 L566 600 Z" fill="url(#hG)"/>
<path d="M550.0 578.0 L553.0 573.0 L558.0 573.5 L560.0 580.0 L556.0 585.0 L551.0 583.0 Z" fill="url(#hG)" stroke="#0c0c0c" stroke-width="1.4" stroke-linejoin="round"/>
<circle cx="555.5" cy="619.5" r="3.2" fill="#111"/>
<path d="M387.0 541.0 L393.0 536.0 L401.0 539.0 L399.0 548.0 L393.0 552.5 L386.0 548.0 Z" fill="url(#hR2)" stroke="#0c0c0c" stroke-width="1.6" stroke-linejoin="round"/>
<path d="M703 402 Q702 378 728 376 Q757 376 757.6 402 Q757 420 742 432 L740 437 L737 442 H730.5 L729 437 L726 432 Q704 420 703 402Z" fill="#fff" stroke="#1a1a1a" stroke-width="1.6"/>
<path d="M704.5 398 Q704 410 714 424 Q722 432 728 436 L735 438 Q727 420 721 408 Q715 396 713 386 Q706 390 704.5 398Z" fill="url(#hW)" opacity="0.9"/>
<path d="M728 432 L740 432 L737 441 H730.5 Z" fill="url(#hG)" opacity="0.8"/>
<path d="M730.5 442 H737 L736.7 447.5 H730.8 Z" fill="#fff" stroke="#1a1a1a" stroke-width="1.2"/>
<path d="M424.3 255.5 L435.0 256.0 L436.0 262.0 L444.0 262.0 L444.0 256.0 L452.0 255.5 L452.0 261.0 L459.0 261.0 L459.0 256.0 L466.0 256.5 L466.0 300.0 L424.3 300.0 Z" fill="url(#hT)" stroke="#0a0a0a" stroke-width="1.92" stroke-linejoin="round" />
<path d="M430.3 232.4 L434.500 256" stroke="#0d0d0d" stroke-width="1.800"/><path d="M431.3 232.4 L433.500 256" stroke="#0d0d0d" stroke-width="1"/>
<path d="M409.3 238.0 L429.4 232.8 L430.6 239.7 L414.8 246.1 L416.8 242.0 Z" fill="#fff" stroke="#0a0a0a" stroke-width="1.7999999999999998" stroke-linejoin="round" />
<path d="M431.2 320.0 L431.2 274.0 L435.7 274.0 L435.7 278.5 L440.2 278.5 L440.2 274.0 L444.7 274.0 L444.7 278.5 L449.2 278.5 L449.2 274.0 L453.7 274.0 L453.7 278.5 L458.2 278.5 L458.2 274.0 L462.7 274.0 L462.7 278.5 L467.2 278.5 L467.2 274.0 L467.0 274.0 L467.0 320.0 Z" fill="url(#hT)" stroke="#0a0a0a" stroke-width="1.92" stroke-linejoin="round" />
<path d="M443.500 297 V288 Q443.500 282 449 282 Q454.500 282 454.500 288 V297 Z" fill="#fff" stroke="#0d0d0d" stroke-width="1.400"/><path d="M449 282 V297 M443.500 290 H454.500" stroke="#0d0d0d" stroke-width="1"/>
<path d="M441.0 297.5 L457.0 297.5 L457.0 302.0 L441.0 302.0 Z" fill="#fff" stroke="#0a0a0a" stroke-width="1.56" stroke-linejoin="round" />
<rect x="433" y="284" width="7" height="4" fill="#fff" stroke="#0d0d0d" stroke-width="1.100"/>
<rect x="433" y="292" width="6" height="4" fill="#fff" stroke="#0d0d0d" stroke-width="1.100"/>
<rect x="456" y="283" width="8" height="4" fill="#fff" stroke="#0d0d0d" stroke-width="1.100"/>
<rect x="458" y="292" width="6" height="4" fill="#fff" stroke="#0d0d0d" stroke-width="1.100"/>
<rect x="434" y="305" width="9" height="4" fill="#fff" stroke="#0d0d0d" stroke-width="1.100"/>
<rect x="447" y="306" width="10" height="4" fill="#fff" stroke="#0d0d0d" stroke-width="1.100"/>
<rect x="438" y="312" width="9" height="4" fill="#fff" stroke="#0d0d0d" stroke-width="1.100"/>
<rect x="452" y="312" width="8" height="4" fill="#fff" stroke="#0d0d0d" stroke-width="1.100"/>
<rect x="424" y="289" width="8" height="4" fill="#fff" stroke="#0d0d0d" stroke-width="1.100"/>
<rect x="426" y="296" width="7" height="4" fill="#fff" stroke="#0d0d0d" stroke-width="1.100"/>
<path d="M423 291 Q425 284 432 284 V291 Z" fill="url(#hR)" stroke="#0d0d0d" stroke-width="1.200"/>
<path d="M487.0 281.0 L526.0 281.0 L526.0 322.0 L487.0 322.0 Z" fill="url(#hT)" stroke="#0a0a0a" stroke-width="1.92" stroke-linejoin="round" />
<path d="M479.6 238.0 L529.8 237.0 L529.8 274.4 L479.6 274.4 Z" fill="url(#hW)" stroke="#0a0a0a" stroke-width="1.92" stroke-linejoin="round" />
<path d="M520 238 H529.8 V274.4 H522 Z" fill="url(#hR)"/>
<path d="M477.8 274.4 L535.3 273.5 L535.3 280.8 L477.8 281.0 Z" fill="#fff" stroke="#0a0a0a" stroke-width="2.04" stroke-linejoin="round" />
<path d="M501.0 198.0 L534.3 232.8 L534.0 237.5 L471.4 239.0 L471.4 234.3 Z" fill="url(#hR)" stroke="#0a0a0a" stroke-width="2.28" stroke-linejoin="round" />
<path d="M471.4 234.3 L534.3 232.8" stroke="#0d0d0d" stroke-width="1.500"/>
<path d="M501 202 L478 232 L500 232 Z" fill="#fff" opacity="0.550"/>
<circle cx="506.4" cy="255.3" r="9.500" fill="#fff" stroke="#0d0d0d" stroke-width="1.900"/><path d="M506.4 246 V265 M497 255.3 H516" stroke="#0d0d0d" stroke-width="1.500"/>
<rect x="481" y="241" width="8" height="4" fill="#fff" stroke="#0d0d0d" stroke-width="1.100"/>
<rect x="494" y="239" width="9" height="4" fill="#fff" stroke="#0d0d0d" stroke-width="1.100"/>
<rect x="505" y="241" width="8" height="4" fill="#fff" stroke="#0d0d0d" stroke-width="1.100"/>
<rect x="483" y="251" width="8" height="4" fill="#fff" stroke="#0d0d0d" stroke-width="1.100"/>
<rect x="486" y="258" width="9" height="4" fill="#fff" stroke="#0d0d0d" stroke-width="1.100"/>
<rect x="483" y="266" width="6" height="4" fill="#fff" stroke="#0d0d0d" stroke-width="1.100"/>
<rect x="521" y="247" width="6" height="4" fill="#fff" stroke="#0d0d0d" stroke-width="1.100"/>
<rect x="522" y="258" width="6" height="4" fill="#fff" stroke="#0d0d0d" stroke-width="1.100"/>
<rect x="496" y="268" width="8" height="4" fill="#fff" stroke="#0d0d0d" stroke-width="1.100"/>
<rect x="506" y="268" width="9" height="4" fill="#fff" stroke="#0d0d0d" stroke-width="1.100"/>
<rect x="489" y="287" width="8" height="4" fill="#fff" stroke="#0d0d0d" stroke-width="1.100"/>
<rect x="491" y="296" width="8" height="4" fill="#fff" stroke="#0d0d0d" stroke-width="1.100"/>
<rect x="489" y="306" width="7" height="4" fill="#fff" stroke="#0d0d0d" stroke-width="1.100"/>
<rect x="514" y="289" width="8" height="4" fill="#fff" stroke="#0d0d0d" stroke-width="1.100"/>
<rect x="517" y="296" width="7" height="4" fill="#fff" stroke="#0d0d0d" stroke-width="1.100"/>
<rect x="512" y="305" width="7" height="4" fill="#fff" stroke="#0d0d0d" stroke-width="1.100"/>
<rect x="492" y="313" width="9" height="4" fill="#fff" stroke="#0d0d0d" stroke-width="1.100"/>
<path d="M504.0 297 V290 Q506.5 286 509.0 290 V297 Z" fill="#111"/><rect x="502.5" y="297" width="8" height="2.800" fill="#fff" stroke="#0d0d0d" stroke-width="1"/>
<path d="M505.5 315 V308 Q508 304 510.5 308 V315 Z" fill="#111"/><rect x="504" y="315" width="8" height="2.800" fill="#fff" stroke="#0d0d0d" stroke-width="1"/>
<path d="M470.6 257 Q470.5 284 465.5 296 H482.8 Q474.2 284 473 257 Z" fill="url(#hW)" stroke="#0a0a0a" stroke-width="1.8" stroke-linejoin="round"/>
<circle cx="471.4" cy="251" r="6.200" fill="#fff" stroke="#0d0d0d" stroke-width="1.600"/><path d="M466 250 Q467 256 472 257" stroke="#555" stroke-width="1" fill="none"/>
<path d="M462.3 306.4 L464.0 299.0 L469.0 296.0 L479.0 296.0 L483.0 300.0 L484.0 306.4 Z" fill="url(#hR)" stroke="#0a0a0a" stroke-width="1.7999999999999998" stroke-linejoin="round" />
<path d="M439.500 322 Q447 309 471.4 307.3 Q494 309 501.500 322 Z" fill="url(#hR)" stroke="#0a0a0a" stroke-width="1.700"/>
<path d="M455 312 Q470 307 488 314 L494 320 H450 Z" fill="#fff" opacity="0.350"/>
<path d="M428.600 347 Q428 324 445 321.500 H497 Q512 323 512.600 347 Z" fill="url(#hR)" stroke="#0a0a0a" stroke-width="1.600"/>
<path d="M445 326 H496 Q505 332 506 344 H440 Q436 334 445 326Z" fill="#fff" opacity="0.450"/>
<path d="M384.800 359.200 Q386 349 398 344 H552 Q562 348 563.600 359.200 Z" fill="url(#hR)" stroke="#0a0a0a" stroke-width="1.600"/>
<path d="M428.6 347.4 L512.6 347.4 L512.6 359.0 L428.6 359.0 Z" fill="url(#hW)" stroke="#0a0a0a" stroke-width="1.7999999999999998" stroke-linejoin="round" />
<path d="M371.0 388.0 L580.0 383.0 L580.0 450.0 L371.0 453.0 Z" fill="url(#hW)" stroke="#0a0a0a" stroke-width="2.4" stroke-linejoin="round" />
<path d="M363.0 390.0 L363.0 367.5 L371.3 367.5 L371.3 375.0 L379.6 375.0 L379.6 367.5 L387.9 367.3 L387.9 374.8 L396.2 374.8 L396.2 367.3 L404.6 367.1 L404.6 374.6 L412.9 374.6 L412.9 367.1 L421.2 367.0 L421.2 374.5 L429.5 374.5 L429.5 367.0 L437.8 366.8 L437.8 374.3 L446.1 374.3 L446.1 366.8 L454.4 366.6 L454.4 374.1 L462.7 374.1 L462.7 366.6 L471.0 366.4 L471.0 373.9 L479.4 373.9 L479.4 366.4 L487.7 366.2 L487.7 373.7 L496.0 373.7 L496.0 366.2 L504.3 366.0 L504.3 373.5 L512.6 373.5 L512.6 366.0 L520.9 365.9 L520.9 373.4 L529.2 373.4 L529.2 365.9 L537.5 365.7 L537.5 373.2 L545.8 373.2 L545.8 365.7 L554.2 365.5 L554.2 373.0 L562.5 373.0 L562.5 365.5 L570.8 365.3 L570.8 372.8 L579.1 372.8 L579.1 365.3 L587.4 365.0 L587.4 383.5 Z" fill="url(#hW)" stroke="#0a0a0a" stroke-width="2.4" stroke-linejoin="round" />
<path d="M399.4 332.0 L427.7 332.0 L427.7 370.0 L399.4 370.0 Z" fill="url(#hR2)" stroke="#0a0a0a" stroke-width="1.92" stroke-linejoin="round" />
<path d="M403.4 344.5 V339 Q405.4 336 407.4 339 V344.5 Z" fill="#0d0d0d"/><rect x="402.4" y="344.5" width="6" height="2" fill="#fff" stroke="#0d0d0d" stroke-width="0.700"/>
<path d="M411.4 343.5 V338 Q413.4 335 415.4 338 V343.5 Z" fill="#0d0d0d"/><rect x="410.4" y="343.5" width="6" height="2" fill="#fff" stroke="#0d0d0d" stroke-width="0.700"/>
<path d="M419.4 344.5 V339 Q421.4 336 423.4 339 V344.5 Z" fill="#0d0d0d"/><rect x="418.4" y="344.5" width="6" height="2" fill="#fff" stroke="#0d0d0d" stroke-width="0.700"/>
<path d="M406.4 355.5 V350 Q408.4 347 410.4 350 V355.5 Z" fill="#0d0d0d"/><rect x="405.4" y="355.5" width="6" height="2" fill="#fff" stroke="#0d0d0d" stroke-width="0.700"/>
<path d="M416.4 354.5 V349 Q418.4 346 420.4 349 V354.5 Z" fill="#0d0d0d"/><rect x="415.4" y="354.5" width="6" height="2" fill="#fff" stroke="#0d0d0d" stroke-width="0.700"/>
<path d="M403.4 366.5 V361 Q405.4 358 407.4 361 V366.5 Z" fill="#0d0d0d"/><rect x="402.4" y="366.5" width="6" height="2" fill="#fff" stroke="#0d0d0d" stroke-width="0.700"/>
<path d="M412.4 365.5 V360 Q414.4 357 416.4 360 V365.5 Z" fill="#0d0d0d"/><rect x="411.4" y="365.5" width="6" height="2" fill="#fff" stroke="#0d0d0d" stroke-width="0.700"/>
<path d="M420.4 366.5 V361 Q422.4 358 424.4 361 V366.5 Z" fill="#0d0d0d"/><rect x="419.4" y="366.5" width="6" height="2" fill="#fff" stroke="#0d0d0d" stroke-width="0.700"/>
<path d="M393.5 332.8 L394.5 328.0 L432.5 328.0 L433.5 332.8 Z" fill="#fff" stroke="#0a0a0a" stroke-width="1.7999999999999998" stroke-linejoin="round" />
<path d="M396.54999999999995 328 Q399.54999999999995 318 406.54999999999995 314 H420.54999999999995 Q427.54999999999995 318 430.54999999999995 328 Z" fill="url(#hR)" stroke="#0a0a0a" stroke-width="1.500"/>
<path d="M404.54999999999995 314 Q405.54999999999995 309 408.54999999999995 306 H418.54999999999995 Q421.54999999999995 309 422.54999999999995 314 Z" fill="url(#hR)" stroke="#0a0a0a" stroke-width="1.400"/>
<path d="M413.4 290.5 L418.0 306.0 L409.0 306.0 Z" fill="url(#hR)" stroke="#0a0a0a" stroke-width="1.68" stroke-linejoin="round" />
<path d="M512.6 332.0 L542.7 332.0 L542.7 370.0 L512.6 370.0 Z" fill="url(#hR2)" stroke="#0a0a0a" stroke-width="1.92" stroke-linejoin="round" />
<path d="M516.6 344.5 V339 Q518.6 336 520.6 339 V344.5 Z" fill="#0d0d0d"/><rect x="515.6" y="344.5" width="6" height="2" fill="#fff" stroke="#0d0d0d" stroke-width="0.700"/>
<path d="M524.6 343.5 V338 Q526.6 335 528.6 338 V343.5 Z" fill="#0d0d0d"/><rect x="523.6" y="343.5" width="6" height="2" fill="#fff" stroke="#0d0d0d" stroke-width="0.700"/>
<path d="M532.6 344.5 V339 Q534.6 336 536.6 339 V344.5 Z" fill="#0d0d0d"/><rect x="531.6" y="344.5" width="6" height="2" fill="#fff" stroke="#0d0d0d" stroke-width="0.700"/>
<path d="M519.6 355.5 V350 Q521.6 347 523.6 350 V355.5 Z" fill="#0d0d0d"/><rect x="518.6" y="355.5" width="6" height="2" fill="#fff" stroke="#0d0d0d" stroke-width="0.700"/>
<path d="M529.6 354.5 V349 Q531.6 346 533.6 349 V354.5 Z" fill="#0d0d0d"/><rect x="528.6" y="354.5" width="6" height="2" fill="#fff" stroke="#0d0d0d" stroke-width="0.700"/>
<path d="M516.6 366.5 V361 Q518.6 358 520.6 361 V366.5 Z" fill="#0d0d0d"/><rect x="515.6" y="366.5" width="6" height="2" fill="#fff" stroke="#0d0d0d" stroke-width="0.700"/>
<path d="M525.6 365.5 V360 Q527.6 357 529.6 360 V365.5 Z" fill="#0d0d0d"/><rect x="524.6" y="365.5" width="6" height="2" fill="#fff" stroke="#0d0d0d" stroke-width="0.700"/>
<path d="M533.6 366.5 V361 Q535.6 358 537.6 361 V366.5 Z" fill="#0d0d0d"/><rect x="532.6" y="366.5" width="6" height="2" fill="#fff" stroke="#0d0d0d" stroke-width="0.700"/>
<path d="M507.7 332.8 L508.7 328.0 L546.7 328.0 L547.7 332.8 Z" fill="#fff" stroke="#0a0a0a" stroke-width="1.7999999999999998" stroke-linejoin="round" />
<path d="M510.6500000000001 328 Q513.6500000000001 318 520.6500000000001 314 H534.6500000000001 Q541.6500000000001 318 544.6500000000001 328 Z" fill="url(#hR)" stroke="#0a0a0a" stroke-width="1.500"/>
<path d="M518.6500000000001 314 Q519.6500000000001 309 522.6500000000001 306 H532.6500000000001 Q535.6500000000001 309 536.6500000000001 314 Z" fill="url(#hR)" stroke="#0a0a0a" stroke-width="1.400"/>
<path d="M526.0 290.5 L532.2 306.0 L523.2 306.0 Z" fill="url(#hR)" stroke="#0a0a0a" stroke-width="1.68" stroke-linejoin="round" />
<rect x="374" y="407" width="11" height="8" fill="#fff" stroke="#0d0d0d" stroke-width="1.500"/>
<rect x="373" y="424" width="13" height="8" fill="#fff" stroke="#0d0d0d" stroke-width="1.500"/>
<rect x="404" y="413" width="17" height="7" fill="#fff" stroke="#0d0d0d" stroke-width="1.500"/>
<rect x="420" y="414" width="18" height="7" fill="#fff" stroke="#0d0d0d" stroke-width="1.500"/>
<rect x="412" y="422" width="17" height="7" fill="#fff" stroke="#0d0d0d" stroke-width="1.500"/>
<rect x="427" y="391" width="16" height="7" fill="#fff" stroke="#0d0d0d" stroke-width="1.500"/>
<rect x="437" y="398" width="15" height="7" fill="#fff" stroke="#0d0d0d" stroke-width="1.500"/>
<rect x="535" y="393" width="14" height="8" fill="#fff" stroke="#0d0d0d" stroke-width="1.500"/>
<rect x="549" y="393" width="14" height="8" fill="#fff" stroke="#0d0d0d" stroke-width="1.500"/>
<rect x="504" y="425" width="12" height="8" fill="#fff" stroke="#0d0d0d" stroke-width="1.500"/>
<rect x="516" y="425" width="13" height="8" fill="#fff" stroke="#0d0d0d" stroke-width="1.500"/>
<rect x="524" y="433" width="15" height="7" fill="#fff" stroke="#0d0d0d" stroke-width="1.500"/>
<rect x="571" y="400" width="8" height="10" fill="#fff" stroke="#0d0d0d" stroke-width="1.500"/>
<rect x="566" y="408" width="8" height="9" fill="#fff" stroke="#0d0d0d" stroke-width="1.500"/>
<rect x="565" y="441" width="14" height="9" fill="#fff" stroke="#0d0d0d" stroke-width="1.500"/>
<rect x="440" y="428" width="9" height="14" fill="#fff" stroke="#0d0d0d" stroke-width="1.500"/>
<rect x="438" y="412" width="8" height="12" fill="#fff" stroke="#0d0d0d" stroke-width="1.500"/>
<path d="M437 456 V420 Q440 396 467 395 Q495 396 498 420 V455 Z" fill="#fff" stroke="#0a0a0a" stroke-width="1.800"/>
<path d="M448.700 456 V424 Q450 403 470 402.500 Q490 403 492.500 424 V455.500 Z" fill="url(#hGate)" stroke="#0a0a0a" stroke-width="1.800"/>
<path d="M485 410 Q491 416 491.500 430 V455 H486 V430 Q486 418 480 408 Z" fill="#0d0d0d"/>
<path d="M459 406 V456 M470 403 V456 M481 406 V456 M449 415 H492 M449 427 H492 M449 440 H492" stroke="#0d0d0d" stroke-width="1.500" fill="none"/>
<path d="M437 432 L448 431 M437 420 L448 422 M441 406 L450 411 M452 398 L457 405 M467 395 V402 M482 398 L479 405 M493 407 L487 412 M498 422 L492 423 M498 438 L492 438" stroke="#0d0d0d" stroke-width="1.200"/>
</svg><!--/ART-->
<div id="vscroll" class="abs">
  <div class="abs" style="left:0;top:0;width:15px;height:14px;background:#474747"></div><div class="abs" style="left:0;top:695px;width:15px;height:14px;background:#474747"></div>
  <div class="abs" style="left:0;top:232px;width:15px;height:462px;background:#484848;border:1px solid #525252;border-right-color:#3a3a3a"></div>
</div>
<div id="hscroll" class="abs">
  <div class="abs" style="left:0;top:0;width:13px;height:16px;background:#474747"></div><div class="abs" style="left:1241px;top:0;width:13px;height:16px;background:#474747"></div>
  <div class="abs" style="left:391px;top:1px;width:470px;height:15px;background:#494949;border:1px solid #555"></div>
</div>
<!-- DOCK -->
<div id="dock" class="abs"></div>
<!-- dock: tabs -->
<div class="dk" style="left:1350px;top:88px;width:8px;height:760px;background:#474747"></div>
<div class="dk" style="left:1582px;top:111px;width:68px;height:1px;background:#5a5a5a"></div>
<div class="dk" style="left:1359px;top:91px;width:137px;height:21px;background:#454545;border:1px solid #3a3a3a;border-bottom:1px solid #5a5a5a;border-top-left-radius:2px;border-top-right-radius:2px"></div>
<div class="dk" style="left:1496px;top:88px;width:86px;height:24px;background:#494949;border:1px solid #5a5a5a;border-bottom:none;border-top-left-radius:2px;border-top-right-radius:2px"></div>
<div class="lt" style="left:1368px;top:95px;letter-spacing:-0.25px"><u>A</u>dvanced Color Selector</div>
<div class="lt" style="left:1509px;top:94px;letter-spacing:-0.1px">Tool <u>O</u>ptions</div>
<!-- tool options -->
<div class="lt" style="left:1360px;top:117px;letter-spacing:-0.1px">Tool <u>O</u>ptions</div>
<div class="hdr" style="top:133px"></div>
<div class="lt" style="left:1360px;top:148px;letter-spacing:-0.22px">Brush Smoothing:</div>
<div class="combo" style="left:1479px;top:144px;width:166px;height:23px"></div>
<div class="lt" style="left:1484px;top:148px">None</div>
<div class="dk" style="left:1360px;top:172.5px;width:287px;height:1.6px;background:#6e6e6e"></div>
<div class="dk" style="left:1360px;top:183px;width:15px;height:15px;background:#3b3b3b;border:1px solid #3f3f3f"></div>
<div class="lt" style="left:1380px;top:185px;letter-spacing:-0.2px">Snap to Assistants</div>
<!-- layers -->
<div class="lt" style="left:1360px;top:362px"><u>L</u>ayers</div>
<div class="hdr" style="top:378px"></div>
<div class="combo" style="left:1358px;top:381px;width:244px;height:21px"></div>
<div class="lt" style="left:1362px;top:385px;letter-spacing:-0.25px">Normal</div>
<div class="btn" style="left:1605px;top:381px;width:43px;height:21px"></div>
<div class="dk" style="left:1358px;top:404px;width:242px;height:30px;background:#3a3a3a"></div>
<div class="dk" style="left:1358px;top:405px;width:145px;height:28px;background:#54799d"></div>
<div class="lt" style="left:1444px;top:414px;color:#e4ecf4;letter-spacing:-0.1px">Opacity:  60%</div>
<div class="dk" style="left:1600px;top:404px;width:14px;height:30px;background:#444;border:1px solid #3a3a3a"></div>
<div class="btn" style="left:1619px;top:405px;width:29px;height:29px"></div>
<!-- layer list -->
<div class="dk" style="left:1359px;top:434px;width:274px;height:119px;background:#393939;overflow:hidden" id="llist">
  <div class="dk" style="left:31px;top:-6px;width:32px;height:25px;background:#f4f4f4"></div>
  <div class="dk" style="left:27px;top:34px;width:40px;height:26px;background:#fff"></div>
  <div class="dk" style="left:23px;top:72px;width:251px;height:47px;background:#54799d"></div>
  <div class="dk" style="left:26px;top:75px;width:41px;height:42px;background:#fff;border:1px solid #6d90b3"></div>
  <div class="dk" style="left:70px;top:72px;width:1px;height:47px;background:#46678a"></div>
  <div class="dk" style="left:86px;top:72px;width:1px;height:47px;background:#46678a"></div>
  <div class="dk" style="left:211px;top:72px;width:1px;height:47px;background:#46678a"></div>
  <div class="dk" style="left:232px;top:72px;width:1px;height:47px;background:#46678a"></div>
  <div class="dk" style="left:252px;top:72px;width:1px;height:47px;background:#46678a"></div>
</div>
<div class="lt" style="left:1461px;top:475px;letter-spacing:-0.2px">Paint Layer 13</div>
<div class="lt" style="left:1462px;top:523px;font-weight:bold;color:#e8eef5;letter-spacing:0.4px">Paint Layer 13(...</div>
<div class="dk" style="left:1633px;top:434px;width:15px;height:119px;background:#3d3d3d"></div>
<div class="dk" style="left:1634px;top:453px;width:13px;height:29px;background:#4b4b4b;border:1px solid #555"></div>
<div class="dk" style="left:1358px;top:553px;width:290px;height:1px;background:#2c2c2c"></div>
<!-- brush presets -->
<div class="hdr" style="top:593px"></div>
<div class="lt" style="left:1360px;top:597px;letter-spacing:-0.22px"><u>B</u>rush Presets</div>
<div class="combo" style="left:1358px;top:616px;width:208px;height:21px"></div>
<div class="lt" style="left:1362px;top:620px">All</div>
<div class="btn" style="left:1570px;top:616px;width:52px;height:21px"></div>
<div class="lt" style="left:1592px;top:621px">Tag</div>
<div class="btn" style="left:1625px;top:616px;width:23px;height:21px"></div>
<div class="dk" id="bgrid" style="left:1358px;top:642px;width:272px;height:179px;overflow:hidden;background:#3a3a3a">
<div class="cell" style="left:1px;top:0px;" id="c00"><svg width="52" height="52" viewBox="0 0 52 52"><ellipse cx="22" cy="40" rx="14" ry="10" fill="url(#cd)"/><path d="M28 0 H52 V16 L37 29 L21 12 Z" fill="#2d5a9c"/><path d="M32 0 H44 L28 14 L24 10Z" fill="#3f70b4"/><path d="M21 12 L37 29 L31 34 L16 20 Z" fill="#f8f8f8"/><path d="M16 20 L31 34 L30 36 L15.500 23Z" fill="#cfcfcf"/></svg></div>
<div class="cell" style="left:56px;top:0px;" id="c01"><svg width="52" height="52" viewBox="0 0 52 52"><path d="M14 36 Q18 48 28 44 Q38 40 40 30" fill="none" stroke="url(#cd)" stroke-width="7"/><path d="M36 0 H52 V9 L32 29 L22 21 Z" fill="#3f6fd2"/><path d="M40 0 H47 L27 21 L24 19Z" fill="#6c96ea"/><path d="M22 21 L32 29 L29 32 L19.500 24.500 Z" fill="#f2f4fa"/></svg></div>
<div class="cell" style="left:111px;top:0px;" id="c02"><svg width="52" height="52" viewBox="0 0 52 52"><path d="M5 33 L28 33 L40 46 L18 46Z" fill="url(#cd)"/><path d="M33 0 H52 V24 Q40 28 32 32 Q20 34 21 22 Q24 8 33 0Z" fill="#80858a" filter="url(#bl2)"/><path d="M38 2 Q50 2 52 16 L52 0Z" fill="#5c5f63" filter="url(#bl2)"/></svg></div>
<div class="cell" style="left:166px;top:0px;" id="c03"><svg width="52" height="52" viewBox="0 0 52 52"><circle cx="9" cy="41" r="19" fill="url(#air)"/><path d="M44 0 H52 V6 L36 24 L22 30 L26 18 Z" fill="url(#metal)"/><path d="M31 12 L41 20 L38 23 L28.500 15.500Z" fill="#161616"/><path d="M22 30 L28 22 L33 26 Z" fill="#eee"/><circle cx="38" cy="29" r="1.6" fill="none" stroke="#888" stroke-width="1"/></svg></div>
<div class="cell" style="left:220px;top:0px;" id="c04"><svg width="52" height="52" viewBox="0 0 52 52"><path d="M19 41 Q30 46 52 36" fill="none" stroke="#1c1c1c" stroke-width="5.500" stroke-linecap="round"/><path d="M45 0 H52 V8 L30 28 L22 30 L25 22 Z" fill="#333"/><path d="M46 0 H49 L27 21 L25 22Z" fill="#666"/><path d="M22 30 L24 24 L29 28 Z" fill="#889"/></svg></div>
<div class="cell" style="left:1px;top:54px;" id="c10"><svg width="52" height="52" viewBox="0 0 52 52"><path d="M18 38 Q20 50 52 38" fill="none" stroke="url(#sfade)" stroke-width="5.500"/><path d="M42 0 H52 V12 L34 27 L20 31 L26 17 Z" fill="#1f1f1f"/><path d="M44 0 H48 L30 16 L27 17Z" fill="#555"/></svg></div>
<div class="cell" style="left:56px;top:54px;" id="c11"><svg width="52" height="52" viewBox="0 0 52 52"><path d="M14 42 Q22 46 30 40 Q40 36 52 42" fill="none" stroke="#555" stroke-width="6" opacity="0.85" filter="url(#bl)"/><path d="M46 0 H52 V8 L34 27 L22 31 L26 20 Z" fill="#cfd2d6"/><path d="M47 0 H50 L29 21 L27 20Z" fill="#f6f6f6"/><path d="M28 18 L36 25" stroke="#d08060" stroke-width="1.2"/><path d="M22 31 L25 24 L30 28Z" fill="#f4f4f4"/></svg></div>
<div class="cell" style="left:111px;top:54px;" id="c12"><svg width="52" height="52" viewBox="0 0 52 52"><path d="M16 42 Q22 48 30 42 Q38 38 52 42" fill="none" stroke="#666" stroke-width="7" opacity="0.7" filter="url(#bl)"/><path d="M45 0 H52 V8 L35 27 L21 32 L26 19 Z" fill="#8d9093"/><path d="M46 0 H49 L30 19 L27 19Z" fill="#c4c4c4"/><path d="M21 32 L25 23 L31 28Z" fill="#e6e6e6"/></svg></div>
<div class="cell" style="left:166px;top:54px;" id="c13"><svg width="52" height="52" viewBox="0 0 52 52"><path d="M15 37 Q18 42 23 38 Q27 35 30 40 Q34 44 52 34" fill="none" stroke="#222" stroke-width="2.200"/><path d="M52 32 L52 38 L40 42Z" fill="#222"/><path d="M44 0 H50 L33 20 L29 17 Z" fill="#a9a9ad"/><path d="M33 20 L29 17 L19 29 Q24 28 33 20Z" fill="#3a1018"/><path d="M47 0 H52 V4 L48 2Z" fill="#777"/></svg></div>
<div class="cell" style="left:220px;top:54px;" id="c14"><svg width="52" height="52" viewBox="0 0 52 52"><path d="M16 38 Q20 44 26 40 Q34 44 52 34 L52 40 Q36 46 24 44Z" fill="#444" opacity="0.75" filter="url(#bl2)"/><path d="M40 0 H52 V4 L46 8 Z" fill="#e59a1c"/><path d="M41 4 L46 8 L33 21 L29 18 Z" fill="#b9a6a6"/><path d="M33 21 L29 18 L20 29 Q26 28 33 21Z" fill="#7a4a3a"/></svg></div>
<div class="cell" style="left:1px;top:109px;" id="c20"><svg width="52" height="52" viewBox="0 0 52 52"><path d="M12 45 Q18 50 24 41 Q30 36 30 44 Q34 50 52 34" fill="none" stroke="#333" stroke-width="1.100"/><path d="M46 0 H52 V4 L42 14 L38 10 Z" fill="#e07c1a"/><path d="M38 10 L42 14 L30 25 L28 23Z" fill="#c7c7c7"/><path d="M28 23 L30 25 L23 30 Z" fill="#222"/></svg></div>
<div class="cell" style="left:56px;top:109px;background:#8fc2e8;outline:2px solid #54799d;" id="c21"><svg width="52" height="52" viewBox="0 0 52 52"><path d="M45 2 L51 8 L33 24 L27 20 Z" fill="#1f63e0"/><path d="M46 3 L49 5.500 L31 21 L28.500 20Z" fill="#5b93f5"/><path d="M27 20 L33 24 L24 29 Z" fill="#b8cfe8"/><path d="M24 29 L19.500 31 L25.500 26.500Z" fill="#123"/><rect x="5" y="6.500" width="9" height="5.500" rx="1.500" transform="rotate(-30 9.500 9)" fill="none" stroke="#1e3c78" stroke-width="2"/></svg></div>
<div class="cell" style="left:111px;top:109px;" id="c22"><svg width="52" height="52" viewBox="0 0 52 52"><path d="M13 38 Q14 48 24 42 Q32 36 34 42 Q38 48 52 40" fill="none" stroke="#444" stroke-width="1.100"/><path d="M44 0 H52 V8 L34 25 L27 19 Z" fill="#2c2628"/><path d="M27 19 L34 25 L23 30 Z" fill="#e9dcc0"/><path d="M23 30 L20 31.500 L25 27Z" fill="#111"/></svg></div>
<div class="cell" style="left:166px;top:109px;" id="c23"><svg width="52" height="52" viewBox="0 0 52 52"><path d="M17 36 Q16 50 30 46 Q44 42 52 36" fill="none" stroke="#333" stroke-width="1.800"/><path d="M36 0 H52 V16 L40 26 L26 18 Z" fill="#c89e7c"/><path d="M40 0 H46 L32 19 L28.500 18Z" fill="#e6c8a8"/><path d="M26 18 L40 26 L24 30 Z" fill="#ead9b6"/><path d="M24 30 L20 31 L24 26.500 L27 28.500Z" fill="#222"/></svg></div>
<div class="cell" style="left:220px;top:109px;" id="c24"><svg width="52" height="52" viewBox="0 0 52 52"><path d="M12 42 Q14 50 26 44 Q36 36 40 42 Q44 48 52 36" fill="none" stroke="#666" stroke-width="1.500"/><path d="M46 0 H52 V6 L34 22 L30 18 Z" fill="#9ea2a6"/><path d="M48 0 H50 L32 18 L31 17Z" fill="#f0f0f0"/><path d="M30 18 L34 22 L24 28 Z" fill="#dcdcdc"/><path d="M24 28 L20.500 31 L25.500 25.500Z" fill="#333"/></svg></div>
<div class="cell" style="left:1px;top:164px;" id="c30"><svg width="52" height="52" viewBox="0 0 52 52"><path d="M8 16 Q14 8 18 16" fill="none" stroke="#333" stroke-width="1.400"/></svg></div>
<div class="cell" style="left:56px;top:164px;" id="c31"><svg width="52" height="52" viewBox="0 0 52 52"><path d="M40 0 H52 V14 L46 16 H28 Z" fill="#3f6b35"/><path d="M44 0 H48 L36 14 L33 14Z" fill="#5d8c4e"/></svg></div>
<div class="cell" style="left:111px;top:164px;" id="c32"><svg width="52" height="52" viewBox="0 0 52 52"><path d="M44 0 H52 V10 L42 16 H30 Z" fill="#2b2d33"/><path d="M42 0 H45 L31 16 H28Z" fill="#8c8f96"/></svg></div>
<div class="cell" style="left:166px;top:164px;" id="c33"><svg width="52" height="52" viewBox="0 0 52 52"><path d="M40 0 H52 V8 L44 16 H32 Z" fill="#567184"/><path d="M46 0 H50 L38 14 L35 14Z" fill="#8ea8b8"/></svg></div>
<div class="cell" style="left:220px;top:164px;" id="c34"><svg width="52" height="52" viewBox="0 0 52 52"><path d="M40 2 L52 0 V10 L40 16 H32 Z" fill="#e6d21e"/><path d="M42 4 L49 2 L47 6 L41 8Z" fill="#8f8510"/></svg></div>

</div>
<div class="dk" style="left:1633px;top:642px;width:15px;height:179px;background:#3d3d3d"></div>
<div class="dk" style="left:1634px;top:655px;width:13px;height:28px;background:#4b4b4b;border:1px solid #555"></div>
<div class="dk" style="left:1358px;top:824px;width:290px;height:20px;background:#3a3a3a;border:1px solid #353535"></div>
<div class="lt" style="left:1360px;top:828px;color:#8c8c8c">Search</div>

<!-- STATUS -->
<div id="status" class="abs">
  <div class="abs" style="left:0;top:28px;width:1650px;height:1px;background:#7a7a7a"></div>
</div>
<div class="lt" style="left:39.500px;top:856px;letter-spacing:-0.19px">c) Pencil-1 Hard</div>
<div class="lt" style="left:356.500px;top:856px;letter-spacing:-0.16px">RGB/Alpha (8-bit integer/channel)  sRGB-elle-V2-srgbtrc.icc</div>
<div class="abs" style="left:1072px;top:852px;width:131px;height:20px;border:1px solid #5c5c5c;border-radius:2px"></div>
<div class="abs" style="left:1074px;top:855px;width:7px;height:14px;background:#54799d"></div>
<div class="lt" style="left:1074.500px;top:856px;letter-spacing:-0.03px">3,508 x 2,480 (238.3 MiB)</div>
<div class="lt" style="left:1376.500px;top:856px">0.00°</div>
<div class="lt" style="left:1494px;top:856px">33%</div>
<div class="abs" style="left:1535px;top:860px;width:88px;height:3px;background:#3a3a3a;border-radius:1px"></div>
<div class="abs" style="left:1535px;top:860px;width:18px;height:3px;background:#5b86b0;border-radius:1px"></div>
<div class="abs" style="left:1553px;top:854px;width:11px;height:15px;background:#595959;border:1px solid #6a6a6a;border-radius:2px"></div>
<div class="btn" style="left:1625px;top:852px;width:23px;height:20px"></div>
<div class="abs" style="left:1630px;top:854px;width:13px;height:16px;background:#e8efe6;border:1px solid #8a9a88"></div>
<div class="abs" style="left:1633px;top:858px;width:7px;height:8px;background:#9fc49a"></div>

<svg id="ovl" viewBox="0 0 1650 877">

<defs>
  <radialGradient id="kr" cx="0.35" cy="0.35" r="0.8">
    <stop offset="0" stop-color="#ffffff"/><stop offset="0.35" stop-color="#d8f4ff"/><stop offset="1" stop-color="#8fd"/>
  </radialGradient>
  <linearGradient id="krg" x1="0" y1="0" x2="1" y2="1">
    <stop offset="0" stop-color="#e850d8"/><stop offset="0.45" stop-color="#6fd0f0"/><stop offset="0.75" stop-color="#58e0c0"/><stop offset="1" stop-color="#f0e060"/>
  </linearGradient>
  <linearGradient id="km" x1="0.6" y1="0" x2="0.45" y2="0.62"><stop offset="0" stop-color="#d85aea"/><stop offset="0.55" stop-color="#f2a0ff" stop-opacity="0.9"/><stop offset="1" stop-color="#fff" stop-opacity="0"/></linearGradient>
  <linearGradient id="kc" x1="0.25" y1="1" x2="0.5" y2="0.45"><stop offset="0" stop-color="#38c8d8"/><stop offset="0.5" stop-color="#a8f4f4" stop-opacity="0.9"/><stop offset="1" stop-color="#fff" stop-opacity="0"/></linearGradient>
  <linearGradient id="ky" x1="1" y1="0.8" x2="0.6" y2="0.55"><stop offset="0" stop-color="#d8e890"/><stop offset="0.6" stop-color="#f0f8c8" stop-opacity="0.7"/><stop offset="1" stop-color="#fff" stop-opacity="0"/></linearGradient>
  <g id="kicon">
    <circle cx="7.3" cy="7.7" r="7.3" fill="#fbfbff"/>
    <circle cx="7.3" cy="7.7" r="7.3" fill="url(#km)"/>
    <circle cx="7.3" cy="7.7" r="7.3" fill="url(#kc)"/>
    <circle cx="7.3" cy="7.7" r="7.3" fill="url(#ky)"/>
    <path d="M1.6 2.6 L7.4 7.8" stroke="#3a1870" stroke-width="2.1" stroke-linecap="round"/>
    <ellipse cx="10.6" cy="11" rx="1.2" ry="1.6" fill="#141a08"/>
  </g>
  <g id="xbtn"><path d="M5 5 L12 12 M12 5 L5 12" stroke="#f2f2f2" stroke-width="2.2" stroke-linecap="square"/></g>
  <pattern id="dith" width="3" height="3" patternUnits="userSpaceOnUse"><rect width="1.5" height="1.5" fill="#eee"/><rect x="1.5" y="1.5" width="1.5" height="1.5" fill="#eee"/></pattern>
  <linearGradient id="dm" x1="0" x2="1" y1="0" y2="0"><stop offset="0.2" stop-color="#fff" stop-opacity="0"/><stop offset="0.6" stop-color="#fff" stop-opacity="0.8"/><stop offset="1" stop-color="#fff" stop-opacity="1"/></linearGradient>
  <mask id="dmm"><rect x="223" y="50" width="31" height="30" fill="url(#dm)"/></mask>
</defs>
<!-- title bar krita icon -->
<use href="#kicon" x="2" y="3.5"/>
<!-- window controls -->
<g stroke="#222" stroke-width="1.1" fill="none">
  <path d="M1517 11.5 H1527"/>
  <rect x="1567.5" y="8.8" width="8" height="8" rx="1.5"/><path d="M1570 8.8 V7.8 Q1570 6.8 1571 6.8 H1576.5 Q1577.5 6.8 1577.5 7.8 V13.3 Q1577.5 14.3 1576.5 14.3 H1575.5"/>
  <path d="M1617.5 7.5 L1627.5 17.5 M1627.5 7.5 L1617.5 17.5"/>
</g>
<!-- mouse cursor -->
<path d="M816.5 0.5 L816.5 13.5 L819.5 10.8 L821.8 16 L823.8 15.1 L821.6 10 L825.5 10 Z" fill="#fff" stroke="#000" stroke-width="1"/>
<!-- toolbar grips -->
<g fill="#7a7a7a">
  <rect x="5" y="56" width="2" height="2"/><rect x="9" y="56" width="2" height="2"/>
  <rect x="5" y="60" width="2" height="2"/><rect x="9" y="60" width="2" height="2"/>
  <rect x="5" y="64" width="2" height="2"/><rect x="9" y="64" width="2" height="2"/>
  <rect x="5" y="68" width="2" height="2"/><rect x="9" y="68" width="2" height="2"/>
  <rect x="5" y="72" width="2" height="2"/><rect x="9" y="72" width="2" height="2"/>
  <rect x="213" y="56" width="2" height="2"/><rect x="217" y="56" width="2" height="2"/>
  <rect x="213" y="60" width="2" height="2"/><rect x="217" y="60" width="2" height="2"/>
  <rect x="213" y="64" width="2" height="2"/><rect x="217" y="64" width="2" height="2"/>
  <rect x="213" y="68" width="2" height="2"/><rect x="217" y="68" width="2" height="2"/>
  <rect x="213" y="72" width="2" height="2"/><rect x="217" y="72" width="2" height="2"/>
</g>
<g stroke="#cfcfcf" stroke-width="1.5" fill="none" stroke-linejoin="round">
  <!-- new -->
  <path d="M22.7 57.7 H37.3 V69 L33 73.3 H22.7 Z"/><path d="M37.3 69 H33 V73.3" fill="#cfcfcf"/>
  <!-- open -->
  <path d="M58.7 61.5 H75.3 V72.3 H58.7 Z"/><path d="M58.7 61.5 V57.7 H65 L67 60 H75.3 V61.5" fill="#cfcfcf"/>
  <!-- save -->
  <path d="M94.7 57.7 H108 L111.3 61 V72.3 H94.7 Z"/><path d="M98.5 57.7 V63 H106 V57.7"/><path d="M98 72.3 V66.5 H108 V72.3"/>
  <!-- undo -->
  <path d="M149.5 57 L145 61 L149.5 65"/><path d="M146 61 Q158 60 157.5 67 Q157 72.5 149 73"/>
  <!-- redo -->
  <path d="M188.5 57 L193 61 L188.5 65"/><path d="M192 61 Q180 60 180.5 67 Q181 72.5 189 73"/>
</g>
<!-- gradient dither -->
<rect x="224" y="51" width="29" height="28" fill="url(#dith)" mask="url(#dmm)"/>
<!-- fg/bg small reset + swap -->
<rect x="311.5" y="68.5" width="8" height="8" fill="#000" stroke="#ddd" stroke-width="1"/>
<rect x="316.5" y="73.5" width="6" height="6" fill="#fff" stroke="#000" stroke-width="0.6"/>
<g stroke="#e4e4e4" stroke-width="1.6" fill="none"><path d="M330 53 H336 V60"/><path d="M332.5 50 L329.5 53 L332.5 56"/><path d="M333 59 L336 62.5 L339 59"/></g>
<!-- brush preset pencil -->
<g>
  <path d="M383.5 52 L386 55 L374 67 L371.5 64.5 Z" fill="#2f62d0"/>
  <path d="M381.5 52.5 L384.5 51.5 L386.5 53.5 L385.5 56.5" fill="#1c3f9e"/>
  <path d="M371.5 64.5 L374 67 L369 70 Z" fill="#e8d7a8"/>
  <path d="M369 70 L370.3 68 L371 69 Z" fill="#222"/>
</g>
<!-- grid 4 squares -->
<g fill="#d0d0d0">
  <rect x="402" y="58" width="8" height="7.5"/><rect x="412" y="58" width="8" height="7.5"/>
  <rect x="402" y="67.5" width="8" height="7.5"/><rect x="412" y="67.5" width="8" height="7.5"/>
</g>
<g stroke="#494949" stroke-width="1.2" fill="none">
  <path d="M404 62 L405.5 63.5 L408 60"/><path d="M414 62 L415.5 63.5 L418 60"/>
  <path d="M404 71.5 L405.5 73 L408 69.5"/><path d="M414 71.5 L415.5 73 L418 69.5"/>
</g>
<!-- combo arrow -->
<path d="M612.5 64 H620 L616.2 68.5 Z" fill="#c4c4c4"/>
<!-- eraser -->
<g>
  <path d="M641.5 66.5 L652 58 L656.5 63 L646 72 Z" fill="#dfe6ee"/>
  <path d="M641.5 66.5 L644.5 64 L649 69.5 L646 72 Z" fill="#b9c6d4"/>
  <rect x="645" y="72.3" width="11" height="1.4" fill="#dfe6ee"/>
</g>
<!-- preserve alpha checker -->
<g>
  <rect x="681" y="58" width="16" height="16" fill="#a0a0a0"/>
  <g fill="#e4e4e4"><rect x="681" y="58" width="5.3" height="5.3"/><rect x="691.7" y="58" width="5.3" height="5.3"/><rect x="686.3" y="63.3" width="5.4" height="5.4"/><rect x="681" y="68.7" width="5.3" height="5.3"/><rect x="691.7" y="68.7" width="5.3" height="5.3"/></g>
</g>
<!-- reload -->
<g stroke="#c2c2c2" stroke-width="1.4" fill="none">
  <path d="M721.5 68 A6 6 0 0 1 730 60.3"/><path d="M733.2 64 A6 6 0 0 1 724.7 71.7"/>
  <path d="M727.5 58.5 L730.8 60.3 L728.5 63"/><path d="M727.2 73.5 L724 71.7 L726.2 69"/>
</g>
<!-- spin arrows -->
<path d="M913 62 L916.5 57.5 L920 62 Z" fill="#6e6e6e"/><path d="M913 70 L916.5 74.5 L920 70 Z" fill="#c8c8c8"/>
<path d="M929 64 H935 L932 68 Z" fill="#9a9a9a"/>
<path d="M1107 62 L1110.5 57.5 L1114 62 Z" fill="#c8c8c8"/><path d="M1107 70 L1110.5 74.5 L1114 70 Z" fill="#c8c8c8"/>
<path d="M1122 64 H1128 L1125 68 Z" fill="#9a9a9a"/>
<!-- mirror H -->
<path d="M1161.5 57.5 V74.5 H1154.5 Z" fill="#d8d8d8"/><path d="M1163.5 57.5 V74.5 H1171 Z" fill="#d8d8d8"/>
<path d="M1182 64 H1188 L1185 68 Z" fill="#9a9a9a"/>
<!-- mirror V -->
<path d="M1202.5 57.5 L1220.5 65 H1202.5 Z" fill="#d8d8d8"/><path d="M1202.5 67 H1220.5 L1202.5 74.5 Z" fill="#d8d8d8"/>
<path d="M1231 64 H1237 L1234 68 Z" fill="#9a9a9a"/>
<!-- wraparound -->
<g stroke="#d8d8d8" stroke-width="1.6" fill="none"><path d="M1254.5 69 H1266 V74.5"/><path d="M1259 59 V69"/><path d="M1259 63 H1270.5"/><path d="M1266 63 V69"/></g>
<!-- workspace chooser -->
<g stroke="#d8d8d8" stroke-width="1.3" fill="none"><rect x="1622.3" y="59.5" width="12.5" height="12"/><path d="M1622.3 62 H1634.8" stroke-width="2.2"/><path d="M1625 65.5 H1632.5 M1625 68.3 H1632.5" stroke-width="1"/></g>
<path d="M1633.5 71.5 H1639 L1636.2 74.5 Z" fill="#d8d8d8"/>
<!-- tab icons -->
<use href="#kicon" x="94" y="97"/><use href="#kicon" x="412" y="97"/><use href="#kicon" x="728" y="97"/><use href="#kicon" x="1046" y="95.6"/>
<use href="#xbtn" x="364.5" y="96.7"/><use href="#xbtn" x="682.5" y="96.7"/><use href="#xbtn" x="1000.5" y="96.7"/><use href="#xbtn" x="1316.7" y="95.6"/>


<!-- TOOLBOX ICONS -->
<g fill="#d4d4d4" stroke="none">
  <!-- select arrow -->
  <path d="M8 107.5 L8 124 L11.8 120.6 L14.4 127.5 L17.2 126.3 L14.6 119.6 L20 119.4 Z"/>
  <!-- text T -->
  <path d="M34.5 109 H50.5 V113.5 H49 L48 111 H44 V124 L46.5 124.6 V126 H38.5 V124.6 L41 124 V111 H37 L36 113.5 H34.5 Z"/>
</g>
<g stroke="#d4d4d4" stroke-width="1.8" fill="none" stroke-linecap="round" stroke-linejoin="round">
  <!-- edit shapes -->
  <path d="M6.5 152 Q8 141 19 138.5"/><circle cx="20" cy="138.5" r="1.6" fill="#d4d4d4" stroke="none"/><circle cx="6.5" cy="152" r="1.6" fill="#d4d4d4" stroke="none"/>
  <path d="M13.5 144.5 L22 146.5 L15.8 152 Z" fill="#d4d4d4" stroke-width="0.8"/>
  <!-- calligraphy nib -->
  <path d="M34.5 152.5 L37.5 143.5 L44 139.5 L49 144.5 L45 150 Z" fill="#d4d4d4" stroke-width="0.8"/>
  <path d="M45.5 137.5 L50.5 142.5" stroke-width="2"/>
  <path d="M36 151 L42 145" stroke="#494949" stroke-width="1.1"/><circle cx="42.5" cy="144.5" r="1.3" fill="#494949" stroke="none"/>
  <!-- brush (active) -->
  <path d="M17 172.5 Q21.5 170 22.5 172 Q23 174 17.8 178.5 Q15.5 178.5 15.3 176 Z" fill="#e6ebf1" stroke="none"/>
  <path d="M13.8 178.8 L16.2 181 " stroke="#5f82a7" stroke-width="0.8"/>
  <path d="M13.5 178.3 Q15.5 178.8 16.2 181 Q14.5 186 7 187.5 Q6 187 7 185.8 Q9.5 183.5 9.5 181 Q10.5 178 13.5 178.3Z" fill="#e6ebf1" stroke="none"/>
  <!-- line -->
  <path d="M34.5 186.5 L49.5 172.5" stroke-width="1.9"/>
  <!-- rect -->
  <rect x="6.3" y="200.3" width="15" height="15" stroke-linejoin="miter"/>
  <!-- ellipse -->
  <circle cx="42.3" cy="207.8" r="8"/>
  <!-- polygon -->
  <path d="M5.8 236 L11.5 227.5 H22 V237.5 L16.5 243 H6 Z" stroke-linejoin="miter"/>
  <!-- polyline -->
  <path d="M42 227 L35 242.5 L50.5 235 L34.5 227.8" stroke-linejoin="miter"/>
  <!-- bezier -->
  <path d="M6.5 271.5 Q7 259.5 14 258.5 Q21 259.5 21.8 271.5"/><path d="M7 257.5 H21.5" stroke-width="1.2"/>
  <circle cx="6.5" cy="257.3" r="1.7" fill="#d4d4d4" stroke="none"/><circle cx="21.7" cy="257.3" r="1.7" fill="#d4d4d4" stroke="none"/><circle cx="14" cy="257.3" r="1.4" fill="#d4d4d4" stroke="none"/>
  <!-- freehand path -->
  <path d="M35.5 262 Q40 256.5 45 258.5 Q49 261 46 265.5 Q43.5 268 45 271"/>
  <rect x="33.7" y="260" width="3.6" height="3.6" fill="#494949" stroke-width="1"/><rect x="47" y="255.8" width="3.6" height="3.6" fill="#494949" stroke-width="1"/><rect x="43" y="268.5" width="3.6" height="3.6" fill="#494949" stroke-width="1"/>
  <!-- dynamic brush -->
  <path d="M8.5 284 Q19 283.5 21.5 288.5 Q21 294.5 5.5 299"/><circle cx="14" cy="288.5" r="1.5" fill="#d4d4d4" stroke="none"/>
  <!-- multibrush -->
  <path d="M36 290.5 Q42 289 49.5 283.5" stroke-width="1.5"/><path d="M39.5 296.5 Q45.5 292 49.8 284" stroke-width="1.5"/><path d="M46 299 Q49 292 50 284.5" stroke-width="1.5"/>
  <path d="M44.5 283 L50.3 283.2 L50.3 289" stroke-width="1.3"/>
  <circle cx="35.8" cy="290.8" r="1.5" fill="#d4d4d4" stroke="none"/><circle cx="39.2" cy="296.8" r="1.5" fill="#d4d4d4" stroke="none"/><circle cx="46" cy="299.3" r="1.5" fill="#d4d4d4" stroke="none"/>
  <!-- transform -->
  <rect x="6.5" y="318.3" width="15" height="15" stroke-linejoin="miter"/><circle cx="14" cy="325.8" r="1.2" fill="#d4d4d4" stroke="none"/>
  <g fill="#d4d4d4" stroke="none"><rect x="4.7" y="316.5" width="3.6" height="3.6"/><rect x="19.7" y="316.5" width="3.6" height="3.6"/><rect x="4.7" y="331.5" width="3.6" height="3.6"/><rect x="19.7" y="331.5" width="3.6" height="3.6"/><rect x="12.5" y="316.8" width="3" height="3"/><rect x="12.5" y="331.8" width="3" height="3"/><rect x="5" y="324.3" width="3" height="3"/><rect x="20" y="324.3" width="3" height="3"/></g>
  <!-- move -->
  <path d="M42.2 319.5 V332.5 M35.5 326 H49" stroke-width="1.5"/>
  <g fill="#d4d4d4" stroke="none"><path d="M42.2 317.5 L45 321 H39.4Z"/><path d="M42.2 334.5 L45 331 H39.4Z"/><path d="M33.8 326 L37.3 323.2 V328.8Z"/><path d="M50.6 326 L47.1 323.2 V328.8Z"/></g>
  <!-- crop -->
  <path d="M5.5 349.5 H18.5 V362.5" stroke-linejoin="miter"/><path d="M9 346 V358.8 H22.3" stroke-linejoin="miter"/><circle cx="18.5" cy="361.5" r="1" fill="#d4d4d4" stroke="none"/>
</g>


<defs><linearGradient id="gt" x1="0" x2="1" y1="0" y2="0"><stop offset="0" stop-color="#4a4a4a"/><stop offset="1" stop-color="#d8d8d8"/></linearGradient></defs>
<g stroke="#d4d4d4" stroke-width="1.8" fill="none" stroke-linecap="round" stroke-linejoin="round">
  <!-- gradient tool -->
  <rect x="5.8" y="380" width="16.4" height="16.4" fill="url(#gt)" stroke-width="1.3" stroke-linejoin="miter"/>
  <!-- color picker -->
  <path d="M35 395.5 L36.5 391.5 L43 385 L46 388 L39.5 394.5 Z" fill="#d4d4d4" stroke-width="0.8"/>
  <path d="M42.5 382.5 L48.5 388.5" stroke-width="2.6" stroke-linecap="butt"/><path d="M44.8 384.8 L48 381.5" stroke-width="3.6"/>
  <!-- colorize mask -->
  <path d="M17.5 409.5 Q21 407 22 408.5 Q22.5 410.5 18 414.5 Q16 414.5 15.8 412.5 Z" fill="#d4d4d4" stroke="none"/>
  <path d="M14.2 414.3 Q16 414.8 16.6 416.8 Q15 421 9.5 422 Q9 421.5 10 420.5 Q11.5 419 11.5 417 Q12 414 14.2 414.3Z" fill="#d4d4d4" stroke="none"/>
  <g stroke-width="1" stroke="#c8c8c8"><path d="M6 412 L8.5 414"/><path d="M4.5 417.5 H7.5"/><path d="M6.5 423 L8.5 421"/><path d="M11 425.5 V423.5"/><path d="M16 424.5 L15 422.8"/><path d="M10.5 409 L11.5 411"/></g>
  <!-- smart patch -->
  <path d="M35.5 423 L49 409.5" stroke-width="3.4" stroke-linecap="butt"/>
  <rect x="35.6" y="410.2" width="3.4" height="3.4" transform="rotate(45 37.3 411.9)" fill="#d4d4d4" stroke-width="0.6"/><rect x="45.2" y="419" width="3.4" height="3.4" transform="rotate(45 46.9 420.7)" fill="#d4d4d4" stroke-width="0.6"/>
  <!-- fill bucket -->
  <path d="M6.8 444.5 L13.5 438.5 L20 445 L13.5 451.5 Z" stroke-width="1.5" stroke-linejoin="miter"/>
  <path d="M7 444.8 H19.5 L13.5 451 Z" fill="#d4d4d4" stroke="none"/>
  <path d="M10 436 L16.5 441.5" stroke-width="1.5"/>
  <path d="M21 447.5 Q23.2 450.5 21.2 452 Q19 451 21 447.5Z" fill="#d4d4d4" stroke-width="0.8"/>
  <!-- assistant -->
  <path d="M5.8 486 V471.5 L21 486 Z" stroke-linejoin="miter" stroke-width="1.7"/><path d="M10 486 V479.5 L16.5 486" stroke-width="1" fill="#494949"/>
  <g stroke-width="0.9" stroke="#494949"><path d="M8.5 486 V484.5 M11 486 V484.5 M13.5 486 V484.5 M16 486 V484.5"/></g>
  <!-- measure -->
  <path d="M34.5 471 L50 486 V470.5" stroke-linejoin="miter" stroke-width="1.8"/><path d="M43.5 479.5 Q46 476.5 50 477" stroke-width="1.4"/>
  <!-- reference pin -->
  <path d="M6.5 513 L12 507.5" stroke-width="1.5"/>
  <path d="M10 503.5 L14.5 499.5 L17 498 L21.5 502.5 L20 505 L16 509.5 L16.5 512 L15 513 L7.5 505.5 L8.5 504 Z" fill="#d4d4d4" stroke="none"/>
</g>
<g stroke="#d4d4d4" stroke-width="1.8" fill="none" stroke-linecap="butt">
  <!-- rect select -->
  <rect x="6" y="533" width="16" height="15" stroke-dasharray="4 2.2" stroke-dashoffset="2"/>
  <!-- ellipse select -->
  <circle cx="42.3" cy="540.3" r="7.6" stroke-dasharray="4 2.3"/>
  <!-- polygon select -->
  <path d="M11 561.5 H21.5 V569.5 L15.5 577 H6 V567.5 Z" stroke-dasharray="4 2.2"/>
  <!-- freehand select -->
  <path d="M37 569 Q33.5 563 38 561.5 Q45 560 49 566 Q51 572 47.5 576 Q43 577 42.5 573 Q46 570 44 567.5 Q41 565.5 37 569Z" stroke-dasharray="3.4 2"/>
  <!-- magic wand -->
  <path d="M12.5 596.5 L20.5 604.5" stroke-width="2" stroke-linecap="round"/>
  <g stroke-width="1.4"><path d="M10 589.5 V600.5 M5 595 H15 M6.5 591.5 L13.5 598.5 M13.5 591.5 L6.5 598.5"/></g>
  <!-- similar select -->
  <path d="M38 590 H35 V605 H50 V599" stroke-dasharray="4 2.2"/>
  <path d="M37.5 603 L38.5 599.8 L44.5 593.8 L46.8 596.2 L40.8 602 Z" fill="#d4d4d4" stroke-width="0.6"/><path d="M43.5 591.5 L49 597" stroke-width="2.2"/><path d="M46 593.8 L48.8 591" stroke-width="3" stroke-linecap="round"/>
  <!-- bezier select -->
  <path d="M7 618.5 H21" stroke-width="1.2"/><circle cx="6.5" cy="618.5" r="1.8" fill="#d4d4d4" stroke="none"/><circle cx="21.5" cy="618.5" r="1.8" fill="#d4d4d4" stroke="none"/><circle cx="14" cy="618.5" r="1.5" fill="#d4d4d4" stroke="none"/>
  <path d="M6.3 622 Q5.5 633 14 633.2 Q22.5 633 21.7 622" stroke-dasharray="4 2.2"/>
  <!-- magnetic select -->
  <path d="M38.5 617.5 H35 V632.5 H50 V629" stroke-dasharray="4 2.2"/>
  <path d="M40.5 623.5 Q40 617.5 45 617.5 Q50 617.5 49.5 622.5 Q49 626 45.5 629.5" stroke-width="2" stroke-linecap="round"/>
  <!-- zoom -->
  <circle cx="17" cy="655.5" r="4.6" stroke-width="1.8"/><path d="M13.8 659 L6.8 666.3" stroke-width="2.4" stroke-linecap="round"/>
  <!-- pan hand -->
  <path d="M36.5 660 L34.5 657.5 L35.5 656.5 L38 658.5 V653 H39.8 V658 H40.5 V651.5 H42.5 V658 H43.2 V652 H45.2 V658 H46 V654 H47.8 V662.5 L46.5 667.5 H38.5 Z" fill="#d4d4d4" stroke-width="0.8" stroke-linejoin="round"/>
</g>
<!-- toolbox right splitter dots -->
<g fill="#7c7c7c"><rect x="76" y="460" width="1.5" height="1.5"/><rect x="76" y="463.5" width="1.5" height="1.5"/><rect x="76" y="467" width="1.5" height="1.5"/><rect x="76" y="470.500" width="1.5" height="1.5"/><rect x="76" y="474" width="1.5" height="1.5"/><rect x="76" y="477.5" width="1.5" height="1.5"/></g>


<!-- DOCK ICONS -->
<defs>
  <g id="flt"><rect x="0.5" y="0.5" width="10" height="10" fill="none" stroke="#7a7a7a" stroke-width="1"/><path d="M0.5 3.5 H10.5 M4 0.5 V3.5 M7 0.5 V3.5 M3 10.5 V7.5 H8 V10.5" fill="none" stroke="#7a7a7a" stroke-width="0.9"/></g>
  <g id="cls"><rect x="0.5" y="0.5" width="10" height="10" fill="none" stroke="#7a7a7a" stroke-width="1"/><path d="M1 1 L10 10 M10 1 L1 10" stroke="#7a7a7a" stroke-width="1.1"/></g>
  <g id="eye"><path d="M-7.5 0 Q0 -8.5 7.5 0" fill="none" stroke="#d6d6d6" stroke-width="1.5"/><path d="M-7 2.5 Q0 8.5 7 2.5" fill="none" stroke="#d6d6d6" stroke-width="1.3"/><circle cx="0" cy="-0.5" r="2.9" fill="#d6d6d6"/><circle cx="0" cy="-0.8" r="1.1" fill="#777"/></g>
  <g id="lock"><rect x="0" y="5" width="10" height="7" rx="1" fill="currentColor"/><path d="M5.5 5 V2.8 Q5.5 0.6 7.8 0.6 Q10 0.6 10 2.8 V3.6" fill="none" stroke="currentColor" stroke-width="1.3"/></g>
  <g id="alpha"><path d="M12.5 1.5 Q9.5 11.5 5 11.5 Q1 11.5 1 7 Q1 2 5 2 Q9 2 11 8 Q12 11.5 13.5 11.3" fill="none" stroke="currentColor" stroke-width="1.6"/></g>
  <g id="chk"><rect x="0" y="0" width="16" height="16" fill="currentColor" opacity="0.35"/><g fill="currentColor" opacity="0.8"><rect x="5.3" y="0" width="5.4" height="5.3"/><rect x="0" y="5.3" width="5.3" height="5.4"/><rect x="10.7" y="5.3" width="5.3" height="5.4"/><rect x="5.3" y="10.7" width="5.4" height="5.3"/></g></g>
  <g id="inh"><path d="M0.8 1.8 L9 0.8 L10 6.5 L6 10.5 L2.5 9.5" fill="none" stroke="currentColor" stroke-width="1.2"/><path d="M1 3.5 L6 7.5" stroke="currentColor" stroke-width="1.2"/></g>
  <pattern id="ck" width="12" height="12" patternUnits="userSpaceOnUse"><rect width="12" height="12" fill="#fff"/><rect width="6" height="6" fill="#d9d9d9"/><rect x="6" y="6" width="6" height="6" fill="#d9d9d9"/></pattern>
</defs>
<use href="#flt" x="1621.500" y="117.500"/><use href="#cls" x="1636.500" y="117.500"/>
<use href="#flt" x="1621.500" y="363"/><use href="#cls" x="1636.500" y="363"/>
<use href="#flt" x="1621.500" y="598"/><use href="#cls" x="1636.500" y="598"/>
<!-- splitter dots -->
<g fill="#8a8a8a">
 <rect x="1496" y="354" width="1.5" height="1.5"/><rect x="1499.500" y="354" width="1.5" height="1.5"/><rect x="1503" y="354" width="1.5" height="1.5"/><rect x="1506.500" y="354" width="1.5" height="1.5"/><rect x="1510" y="354" width="1.5" height="1.5"/><rect x="1513.500" y="354" width="1.5" height="1.5"/>
 <rect x="1496" y="589" width="1.5" height="1.5"/><rect x="1499.500" y="589" width="1.5" height="1.5"/><rect x="1503" y="589" width="1.5" height="1.5"/><rect x="1506.500" y="589" width="1.5" height="1.5"/><rect x="1510" y="589" width="1.5" height="1.5"/><rect x="1513.500" y="589" width="1.5" height="1.5"/>
 <rect x="1353" y="460" width="1.5" height="1.5"/><rect x="1353" y="463.500" width="1.5" height="1.5"/><rect x="1353" y="467" width="1.5" height="1.5"/><rect x="1353" y="470.500" width="1.5" height="1.5"/><rect x="1353" y="474" width="1.5" height="1.5"/><rect x="1353" y="477.500" width="1.5" height="1.5"/>
</g>
<!-- combo arrows -->
<path d="M1628 153.500 H1636 L1632 158 Z" fill="#c4c4c4"/>
<path d="M1586 389.500 H1594 L1590 394 Z" fill="#c4c4c4"/>
<path d="M1632 389.500 H1640 L1636 394 Z" fill="#c4c4c4"/>
<path d="M1610.500 385.500 H1621.500 L1617.500 390.500 V396.500 L1614.500 395 V390.500 Z" fill="none" stroke="#d6d6d6" stroke-width="1.3" stroke-linejoin="round"/>
<path d="M1552 624.500 H1560 L1556 629.500 Z" fill="#c4c4c4"/>
<path d="M1615 631 H1620 L1617.500 634 Z" fill="#9a9a9a"/>
<path d="M1577.500 620.500 H1585.500 V632.500 L1581.500 629.500 L1577.500 632.500 Z" fill="none" stroke="#d6d6d6" stroke-width="1.2"/>
<!-- layers opacity spin -->
<path d="M1603.500 416 L1607 412 L1610.500 416 Z" fill="#b8b8b8"/><path d="M1603.500 423 L1607 427 L1610.500 423 Z" fill="#b8b8b8"/>
<!-- layer view button icon -->
<g stroke="#d8d8d8" fill="none"><rect x="1626.500" y="411.500" width="14" height="13.500" stroke-width="1.4"/><path d="M1626.500 414.500 H1640.500" stroke-width="2"/><path d="M1629.500 418 V423" stroke-width="1.6"/><path d="M1633 418.500 H1638 M1633 422 H1638" stroke-width="1.2"/></g>
<path d="M1639 426 H1643 L1641 428.500 Z" fill="#d8d8d8"/>
<!-- brush presets view button icon -->
<g stroke="#d8d8d8" fill="none"><rect x="1631.500" y="620.500" width="11" height="11.500" stroke-width="1.3"/><path d="M1631.500 623.500 H1642.500" stroke-width="2"/><path d="M1634 627 H1640 M1634 629.500 H1640" stroke-width="0.9"/></g>
<path d="M1641 632.500 H1645 L1643 635 Z" fill="#d8d8d8"/>
<!-- layer list scroll arrows -->
<path d="M1636.500 447 L1640.500 442.500 L1644.500 447 Z" fill="#b8b8b8"/><path d="M1636.500 543.500 L1640.500 548 L1644.500 543.500 Z" fill="#b8b8b8"/>
<path d="M1636.500 650 L1640.500 645.500 L1644.500 650 Z" fill="#b8b8b8"/><path d="M1636.500 812.500 L1640.500 817 L1644.500 812.500 Z" fill="#b8b8b8"/>
<!-- layer thumbs -->
<rect x="1386" y="468" width="40" height="26" fill="url(#ck)"/>
<rect x="1386" y="510" width="40" height="41" fill="url(#ck)"/>
<path d="M1396 434 Q1401 443 1406.500 447 Q1411 441 1415 434" fill="none" stroke="#333" stroke-width="1"/><path d="M1404 448 Q1406 452 1409 449" fill="none" stroke="#333" stroke-width="0.9"/>
<path d="M1362 434 Q1369.500 441 1377 434" fill="none" stroke="#d6d6d6" stroke-width="1.2"/>
<!-- eyes -->
<use href="#eye" x="1369.500" y="481.500"/><use href="#eye" x="1369.500" y="530.500"/>
<!-- layer row icons -->
<g color="#6c6c6c"><use href="#lock" x="1574" y="474.500"/><use href="#alpha" x="1593" y="475"/><use href="#chk" x="1613" y="473.500"/></g>
<g color="#c8c8c8"><use href="#inh" x="1433" y="460"/></g>
<g color="#7396b8"><use href="#lock" x="1574" y="523"/><use href="#alpha" x="1593" y="523.500"/><use href="#chk" x="1613" y="522"/></g>
<g color="#b5c9dc"><use href="#inh" x="1433" y="508.500"/></g>
<g color="#6c6c6c"><rect x="1575" y="434" width="10" height="2.500" fill="currentColor"/><rect x="1594" y="434" width="12" height="2" fill="currentColor"/><rect x="1613" y="434" width="16" height="4" fill="currentColor" opacity="0.6"/></g>
<path d="M1438.500 434 L1437.500 437" stroke="#c8c8c8" stroke-width="1.2"/>
<!-- layer bottom toolbar -->
<g stroke="#d8d8d8" stroke-width="1.7" fill="none">
  <rect x="1362" y="562.500" width="16" height="16"/><path d="M1370 566 V575 M1365.500 570.500 H1374.500"/>
  <path d="M1410 562.500 H1422 V574.500 H1410 Z"/><path d="M1406.500 566.500 V578.500 H1418.500"/>
  <path d="M1440.500 566 L1448.500 574.500 L1456.500 566" stroke-width="2"/>
  <path d="M1474 575 L1482 566.500 L1490 575" stroke-width="2"/>
  <path d="M1508 564.500 H1526 M1508 571 H1526 M1508 577.500 H1526" stroke-width="1.5"/>
  <path d="M1518 562.500 V566.500 M1513 569 V573 M1521.500 575.500 V579.500" stroke-width="3"/>
</g>
<path d="M1385.500 569 H1392.500 L1389 573 Z" fill="#9a9a9a"/>
<g fill="#d8d8d8"><rect x="1625.500" y="564.500" width="15" height="2.500" rx="1"/><rect x="1630" y="562" width="6" height="2.500"/><path d="M1627 568.500 H1639 L1638 579.500 H1628 Z"/></g>
<g stroke="#494949" stroke-width="0.9"><path d="M1630.500 570 V578 M1633 570 V578 M1635.500 570 V578"/></g>


<!-- scroll arrows -->
<path d="M1336.500 131.500 L1341 127 L1345.500 131.500 Z" fill="#c0c0c0"/><path d="M1336.500 821.500 L1341 826 L1345.500 821.500 Z" fill="#c0c0c0"/>
<path d="M89 835 L84.500 839.500 L89 844 Z" fill="#c0c0c0"/><path d="M1323.500 835 L1328 839.500 L1323.500 844 Z" fill="#c0c0c0"/>
<!-- status: selection icon -->
<rect x="8" y="853.500" width="16" height="16" fill="none" stroke="#bdbdbd" stroke-width="1.100"/><circle cx="16" cy="861.500" r="4.500" fill="none" stroke="#bdbdbd" stroke-width="1.100" stroke-dasharray="1.600 1.300"/>
<!-- rotation -->
<circle cx="1336" cy="861.500" r="9.500" fill="#2c2c2c"/><path d="M1331 861.500 H1345" stroke="#f0f0f0" stroke-width="1.300"/><path d="M1341.500 858.500 L1345 861.500 L1341.500 864.500" fill="none" stroke="#f0f0f0" stroke-width="1.200"/><circle cx="1331.500" cy="861.500" r="1.400" fill="#f0f0f0"/>

<!--ICONS6-->
</svg>
</body>
</html>
